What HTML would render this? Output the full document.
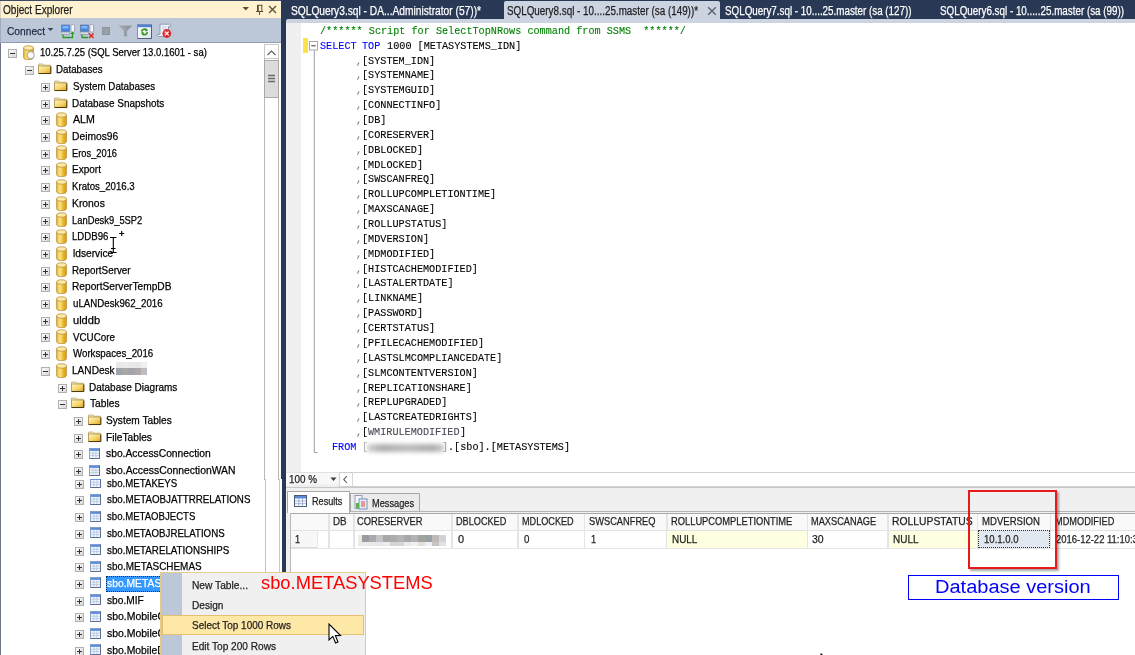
<!DOCTYPE html>
<html><head><meta charset="utf-8"><style>
html,body{margin:0;padding:0;width:1135px;height:655px;overflow:hidden;background:#fff}
body{position:relative}
</style></head><body>
<div style="position:absolute;left:0px;top:0px;width:1135px;height:655px;background:#293955"></div>
<div style="position:absolute;left:0px;top:0px;width:281px;height:655px;background:#ffffff"></div>
<div style="position:absolute;left:0px;top:0px;width:281px;height:1px;background:#3d4a63"></div>
<div style="position:absolute;left:0px;top:1px;width:1px;height:17px;background:#d6d2c4"></div>
<div style="position:absolute;left:0px;top:18px;width:1px;height:25px;background:#a4acbc"></div>
<div style="position:absolute;left:0px;top:43px;width:1px;height:655px;background:#6d7588"></div>
<div style="position:absolute;left:1px;top:1px;width:280px;height:17px;background:#fff2d0;border-radius:0 2px 0 0"></div>
<div style="position:absolute;left:1px;top:18px;width:280px;height:24px;background:#bcc7d8"></div>
<div style="position:absolute;left:1px;top:42px;width:280px;height:1px;background:#8e9bb0"></div>
<div style="position:absolute;left:3.00px;top:2.84px;font-family:'Liberation Sans',sans-serif;font-size:12px;line-height:normal;white-space:pre;color:#1e1e1e;-webkit-text-stroke:0.25px currentColor;transform:scaleX(0.8404);transform-origin:0 0;">Object Explorer</div>
<svg style="position:absolute;left:240px;top:4px" width="40" height="12" viewBox="0 0 40 12"><path d="M2.5 3 L9 3 L5.75 6.5 Z" fill="#5b4e35"/><path d="M17 1.3 H22.5 M21.8 1.3 V7.5 M16 7.5 H23.2 M19.6 7.5 V11" stroke="#5b4e35" stroke-width="1" fill="none"/><path d="M17.9 1.3 V7.5" stroke="#5b4e35" stroke-width="1.8"/><path d="M29 2 L36 9 M36 2 L29 9" stroke="#5b4e35" stroke-width="1.3" fill="none"/></svg>
<div style="position:absolute;left:7.00px;top:24.55px;font-family:'Liberation Sans',sans-serif;font-size:11px;line-height:normal;white-space:pre;color:#1e2a44;-webkit-text-stroke:0.25px currentColor;transform:scaleX(0.9272);transform-origin:0 0;">Connect</div>
<svg style="position:absolute;left:47px;top:27px" width="8" height="5"><path d="M0.5 1 L6.5 1 L3.5 4 Z" fill="#3a4660"/></svg>
<svg style="position:absolute;left:61px;top:24px" width="15" height="15" viewBox="0 0 15 15"><rect x="0.5" y="1" width="8" height="6.5" fill="#3b86e8" stroke="#6b7fa0" stroke-width="0.8"/><rect x="1.5" y="2" width="6" height="2.5" fill="#7fb6ff"/><rect x="0" y="8" width="8.5" height="2.5" fill="#d9dde6" stroke="#8088a0" stroke-width="0.6"/><rect x="10" y="0.5" width="3.5" height="7.5" rx="1" fill="#f4f6fa" stroke="#8a94a8" stroke-width="0.7"/><path d="M2 10.5 v3 h9.5 v-4" stroke="#2a9a2a" stroke-width="1.3" fill="none"/><path d="M9.3 10 L11.5 7.5 L13.7 10 Z" fill="#2a9a2a"/></svg>
<svg style="position:absolute;left:80px;top:24px" width="15" height="15" viewBox="0 0 15 15"><rect x="0.5" y="1" width="8" height="6.5" fill="#3b86e8" stroke="#6b7fa0" stroke-width="0.8"/><rect x="1.5" y="2" width="6" height="2.5" fill="#7fb6ff"/><rect x="0" y="8" width="8.5" height="2.5" fill="#d9dde6" stroke="#8088a0" stroke-width="0.6"/><rect x="10" y="0.5" width="3.5" height="7.5" rx="1" fill="#f4f6fa" stroke="#8a94a8" stroke-width="0.7"/><path d="M2 10.5 v3 h6" stroke="#2a9a2a" stroke-width="1.3" fill="none"/><path d="M9 9.5 L13.5 14 M13.5 9.5 L9 14" stroke="#e8281e" stroke-width="1.6"/></svg>
<div style="position:absolute;left:102px;top:27px;width:7.5px;height:7.5px;background:#9aa0a8;border:0.5px solid #8d939c;box-sizing:border-box"></div>
<svg style="position:absolute;left:118.5px;top:24.5px" width="14" height="12" viewBox="0 0 14 12"><defs><linearGradient id="flg" x1="0" y1="0" x2="1" y2="0"><stop offset="0" stop-color="#b8bcc0"/><stop offset="0.5" stop-color="#9a9ea4"/><stop offset="1" stop-color="#888c92"/></linearGradient></defs><path d="M0.5 1 H12.5 L7.6 5.8 V11 H5.4 V5.8 Z" fill="url(#flg)" stroke="#8a8e94" stroke-width="0.6"/></svg>
<svg style="position:absolute;left:137px;top:23.5px" width="15" height="15" viewBox="0 0 15 15"><defs><linearGradient id="rfg" x1="0" y1="0" x2="1" y2="1"><stop offset="0" stop-color="#ffffff"/><stop offset="1" stop-color="#dfe6f2"/></linearGradient></defs><rect x="0.5" y="0.5" width="14" height="14" fill="url(#rfg)" stroke="#7888a8" stroke-width="0.9"/><rect x="0.9" y="0.9" width="13.2" height="2.3" fill="#4a80e0"/><path d="M0.5 14.5 H14.5 V1" stroke="#50607c" stroke-width="1" fill="none"/><path d="M9.8 6.2 A3 3 0 0 0 4.6 7.6" stroke="#3a9a20" stroke-width="1.8" fill="none"/><path d="M5.2 9.6 A3 3 0 0 0 10.4 8.2" stroke="#3a9a20" stroke-width="1.8" fill="none"/><path d="M8.6 4.2 L11.2 6.8 L8.3 7.6 Z M6.4 11.4 L3.8 8.6 L6.7 7.9 Z" fill="#3a9a20"/></svg>
<svg style="position:absolute;left:156px;top:22.5px" width="17" height="16" viewBox="0 0 17 16"><path d="M4 1.2 H13.5 Q15.5 1.5 14.5 3.5 H12.5 V13.5 H2.5 Q0.3 13 1.5 11.5 H4 Z" fill="#eef2fa" stroke="#8a96ae" stroke-width="0.9"/><path d="M6 4 H10.5 M6 6 H10" stroke="#b8c6e0" stroke-width="0.8"/><circle cx="10.8" cy="10.5" r="4.4" fill="#d8262c"/><circle cx="10.3" cy="9.6" r="2.6" fill="#e8484c" opacity="0.6"/><path d="M8.9 8.6 L12.7 12.4 M12.7 8.6 L8.9 12.4" stroke="#fff" stroke-width="1.2"/></svg>
<div style="position:absolute;left:0;top:43px;width:263px;height:436px;overflow:hidden">
<div style="position:absolute;left:0;top:-43px;width:263px;height:700px">
<svg style="position:absolute;left:8px;top:49px" width="9" height="9" viewBox="0 0 9 9"><defs><linearGradient id="bg" x1="0" y1="0" x2="1" y2="1"><stop offset="0" stop-color="#fefefe"/><stop offset="1" stop-color="#d6d6d6"/></linearGradient></defs><rect x="0.5" y="0.5" width="8" height="8" fill="url(#bg)" stroke="#b0b0b0" stroke-width="1"/><path d="M2 4.5 H7" stroke="#333" stroke-width="1"/></svg>
<svg style="position:absolute;left:22.6px;top:45.199999999999996px" width="14" height="16" viewBox="0 0 14 16"><defs><linearGradient id="dbg" x1="0" y1="0" x2="1" y2="0"><stop offset="0" stop-color="#e6b830"/><stop offset="0.35" stop-color="#fbe48a"/><stop offset="0.7" stop-color="#e9b424"/><stop offset="1" stop-color="#d89a10"/></linearGradient></defs><path d="M0.6 3 V12.5 Q0.6 14.6 5.5 14.6 Q10.4 14.6 10.4 12.5 V3 Z" fill="url(#dbg)" stroke="#b89040" stroke-width="0.8"/><ellipse cx="5.5" cy="3" rx="4.9" ry="2.2" fill="#fbeaa8" stroke="#b89040" stroke-width="0.8"/><circle cx="7.7" cy="10.2" r="3.6" fill="#fbfbfb" stroke="#9a9a9a" stroke-width="0.9"/></svg>
<div style="position:absolute;left:39.65px;top:46.45px;font-family:'Liberation Sans',sans-serif;font-size:11px;line-height:normal;white-space:pre;color:#000000;-webkit-text-stroke:0.25px currentColor;transform:scaleX(0.8653);transform-origin:0 0;">10.25.7.25 (SQL Server 13.0.1601 - sa)</div>
<svg style="position:absolute;left:25px;top:66px" width="9" height="9" viewBox="0 0 9 9"><defs><linearGradient id="bg" x1="0" y1="0" x2="1" y2="1"><stop offset="0" stop-color="#fefefe"/><stop offset="1" stop-color="#d6d6d6"/></linearGradient></defs><rect x="0.5" y="0.5" width="8" height="8" fill="url(#bg)" stroke="#b0b0b0" stroke-width="1"/><path d="M2 4.5 H7" stroke="#333" stroke-width="1"/></svg>
<svg style="position:absolute;left:37.82px;top:63.10999999999999px" width="14" height="12" viewBox="0 0 14 12"><defs><linearGradient id="fg" x1="0" y1="0" x2="1" y2="1"><stop offset="0" stop-color="#fff6c4"/><stop offset="0.55" stop-color="#f6d46a"/><stop offset="1" stop-color="#e0a018"/></linearGradient></defs><path d="M0.5 1 H5 L6 2.2 H12.3 V10.5 H0.5 Z" fill="#f2e4b0" stroke="#b8a470" stroke-width="0.7"/><path d="M0.5 3 H12.8 V10.6 H0.5 Z" fill="url(#fg)" stroke="#a88a40" stroke-width="0.7"/><path d="M0.8 10.5 H12.8 V3.5" stroke="#4a3a10" stroke-width="1" fill="none"/></svg>
<div style="position:absolute;left:56.14px;top:63.15px;font-family:'Liberation Sans',sans-serif;font-size:11px;line-height:normal;white-space:pre;color:#000000;-webkit-text-stroke:0.25px currentColor;transform:scaleX(0.8854);transform-origin:0 0;">Databases</div>
<svg style="position:absolute;left:41px;top:83px" width="9" height="9" viewBox="0 0 9 9"><defs><linearGradient id="bg" x1="0" y1="0" x2="1" y2="1"><stop offset="0" stop-color="#fefefe"/><stop offset="1" stop-color="#d6d6d6"/></linearGradient></defs><rect x="0.5" y="0.5" width="8" height="8" fill="url(#bg)" stroke="#b0b0b0" stroke-width="1"/><path d="M2 4.5 H7" stroke="#333" stroke-width="1"/><path d="M4.5 2 V7" stroke="#333" stroke-width="1"/></svg>
<svg style="position:absolute;left:54.44px;top:79.82px" width="14" height="12" viewBox="0 0 14 12"><defs><linearGradient id="fg" x1="0" y1="0" x2="1" y2="1"><stop offset="0" stop-color="#fff6c4"/><stop offset="0.55" stop-color="#f6d46a"/><stop offset="1" stop-color="#e0a018"/></linearGradient></defs><path d="M0.5 1 H5 L6 2.2 H12.3 V10.5 H0.5 Z" fill="#f2e4b0" stroke="#b8a470" stroke-width="0.7"/><path d="M0.5 3 H12.8 V10.6 H0.5 Z" fill="url(#fg)" stroke="#a88a40" stroke-width="0.7"/><path d="M0.8 10.5 H12.8 V3.5" stroke="#4a3a10" stroke-width="1" fill="none"/></svg>
<div style="position:absolute;left:72.78px;top:79.86px;font-family:'Liberation Sans',sans-serif;font-size:11px;line-height:normal;white-space:pre;color:#000000;-webkit-text-stroke:0.25px currentColor;transform:scaleX(0.8894);transform-origin:0 0;">System Databases</div>
<svg style="position:absolute;left:41px;top:100px" width="9" height="9" viewBox="0 0 9 9"><defs><linearGradient id="bg" x1="0" y1="0" x2="1" y2="1"><stop offset="0" stop-color="#fefefe"/><stop offset="1" stop-color="#d6d6d6"/></linearGradient></defs><rect x="0.5" y="0.5" width="8" height="8" fill="url(#bg)" stroke="#b0b0b0" stroke-width="1"/><path d="M2 4.5 H7" stroke="#333" stroke-width="1"/><path d="M4.5 2 V7" stroke="#333" stroke-width="1"/></svg>
<svg style="position:absolute;left:54.44px;top:96.53px" width="14" height="12" viewBox="0 0 14 12"><defs><linearGradient id="fg" x1="0" y1="0" x2="1" y2="1"><stop offset="0" stop-color="#fff6c4"/><stop offset="0.55" stop-color="#f6d46a"/><stop offset="1" stop-color="#e0a018"/></linearGradient></defs><path d="M0.5 1 H5 L6 2.2 H12.3 V10.5 H0.5 Z" fill="#f2e4b0" stroke="#b8a470" stroke-width="0.7"/><path d="M0.5 3 H12.8 V10.6 H0.5 Z" fill="url(#fg)" stroke="#a88a40" stroke-width="0.7"/><path d="M0.8 10.5 H12.8 V3.5" stroke="#4a3a10" stroke-width="1" fill="none"/></svg>
<div style="position:absolute;left:72.32px;top:96.58px;font-family:'Liberation Sans',sans-serif;font-size:11px;line-height:normal;white-space:pre;color:#000000;-webkit-text-stroke:0.25px currentColor;transform:scaleX(0.9037);transform-origin:0 0;">Database Snapshots</div>
<svg style="position:absolute;left:41px;top:116px" width="9" height="9" viewBox="0 0 9 9"><defs><linearGradient id="bg" x1="0" y1="0" x2="1" y2="1"><stop offset="0" stop-color="#fefefe"/><stop offset="1" stop-color="#d6d6d6"/></linearGradient></defs><rect x="0.5" y="0.5" width="8" height="8" fill="url(#bg)" stroke="#b0b0b0" stroke-width="1"/><path d="M2 4.5 H7" stroke="#333" stroke-width="1"/><path d="M4.5 2 V7" stroke="#333" stroke-width="1"/></svg>
<svg style="position:absolute;left:55.739999999999995px;top:112.04px" width="14" height="16" viewBox="0 0 14 16"><defs><linearGradient id="dbg" x1="0" y1="0" x2="1" y2="0"><stop offset="0" stop-color="#e6b830"/><stop offset="0.35" stop-color="#fbe48a"/><stop offset="0.7" stop-color="#e9b424"/><stop offset="1" stop-color="#d89a10"/></linearGradient></defs><path d="M0.6 3 V12.5 Q0.6 14.6 5.5 14.6 Q10.4 14.6 10.4 12.5 V3 Z" fill="url(#dbg)" stroke="#b89040" stroke-width="0.8"/><ellipse cx="5.5" cy="3" rx="4.9" ry="2.2" fill="#fbeaa8" stroke="#b89040" stroke-width="0.8"/></svg>
<div style="position:absolute;left:73.00px;top:113.28px;font-family:'Liberation Sans',sans-serif;font-size:11px;line-height:normal;white-space:pre;color:#000000;-webkit-text-stroke:0.25px currentColor;transform:scaleX(0.9682);transform-origin:0 0;">ALM</div>
<svg style="position:absolute;left:41px;top:133px" width="9" height="9" viewBox="0 0 9 9"><defs><linearGradient id="bg" x1="0" y1="0" x2="1" y2="1"><stop offset="0" stop-color="#fefefe"/><stop offset="1" stop-color="#d6d6d6"/></linearGradient></defs><rect x="0.5" y="0.5" width="8" height="8" fill="url(#bg)" stroke="#b0b0b0" stroke-width="1"/><path d="M2 4.5 H7" stroke="#333" stroke-width="1"/><path d="M4.5 2 V7" stroke="#333" stroke-width="1"/></svg>
<svg style="position:absolute;left:55.739999999999995px;top:128.75000000000003px" width="14" height="16" viewBox="0 0 14 16"><defs><linearGradient id="dbg" x1="0" y1="0" x2="1" y2="0"><stop offset="0" stop-color="#e6b830"/><stop offset="0.35" stop-color="#fbe48a"/><stop offset="0.7" stop-color="#e9b424"/><stop offset="1" stop-color="#d89a10"/></linearGradient></defs><path d="M0.6 3 V12.5 Q0.6 14.6 5.5 14.6 Q10.4 14.6 10.4 12.5 V3 Z" fill="url(#dbg)" stroke="#b89040" stroke-width="0.8"/><ellipse cx="5.5" cy="3" rx="4.9" ry="2.2" fill="#fbeaa8" stroke="#b89040" stroke-width="0.8"/></svg>
<div style="position:absolute;left:72.30px;top:130.00px;font-family:'Liberation Sans',sans-serif;font-size:11px;line-height:normal;white-space:pre;color:#000000;-webkit-text-stroke:0.25px currentColor;transform:scaleX(0.9340);transform-origin:0 0;">Deimos96</div>
<svg style="position:absolute;left:41px;top:150px" width="9" height="9" viewBox="0 0 9 9"><defs><linearGradient id="bg" x1="0" y1="0" x2="1" y2="1"><stop offset="0" stop-color="#fefefe"/><stop offset="1" stop-color="#d6d6d6"/></linearGradient></defs><rect x="0.5" y="0.5" width="8" height="8" fill="url(#bg)" stroke="#b0b0b0" stroke-width="1"/><path d="M2 4.5 H7" stroke="#333" stroke-width="1"/><path d="M4.5 2 V7" stroke="#333" stroke-width="1"/></svg>
<svg style="position:absolute;left:55.739999999999995px;top:145.46px" width="14" height="16" viewBox="0 0 14 16"><defs><linearGradient id="dbg" x1="0" y1="0" x2="1" y2="0"><stop offset="0" stop-color="#e6b830"/><stop offset="0.35" stop-color="#fbe48a"/><stop offset="0.7" stop-color="#e9b424"/><stop offset="1" stop-color="#d89a10"/></linearGradient></defs><path d="M0.6 3 V12.5 Q0.6 14.6 5.5 14.6 Q10.4 14.6 10.4 12.5 V3 Z" fill="url(#dbg)" stroke="#b89040" stroke-width="0.8"/><ellipse cx="5.5" cy="3" rx="4.9" ry="2.2" fill="#fbeaa8" stroke="#b89040" stroke-width="0.8"/></svg>
<div style="position:absolute;left:72.37px;top:146.70px;font-family:'Liberation Sans',sans-serif;font-size:11px;line-height:normal;white-space:pre;color:#000000;-webkit-text-stroke:0.25px currentColor;transform:scaleX(0.8459);transform-origin:0 0;">Eros_2016</div>
<svg style="position:absolute;left:41px;top:166px" width="9" height="9" viewBox="0 0 9 9"><defs><linearGradient id="bg" x1="0" y1="0" x2="1" y2="1"><stop offset="0" stop-color="#fefefe"/><stop offset="1" stop-color="#d6d6d6"/></linearGradient></defs><rect x="0.5" y="0.5" width="8" height="8" fill="url(#bg)" stroke="#b0b0b0" stroke-width="1"/><path d="M2 4.5 H7" stroke="#333" stroke-width="1"/><path d="M4.5 2 V7" stroke="#333" stroke-width="1"/></svg>
<svg style="position:absolute;left:55.739999999999995px;top:162.17px" width="14" height="16" viewBox="0 0 14 16"><defs><linearGradient id="dbg" x1="0" y1="0" x2="1" y2="0"><stop offset="0" stop-color="#e6b830"/><stop offset="0.35" stop-color="#fbe48a"/><stop offset="0.7" stop-color="#e9b424"/><stop offset="1" stop-color="#d89a10"/></linearGradient></defs><path d="M0.6 3 V12.5 Q0.6 14.6 5.5 14.6 Q10.4 14.6 10.4 12.5 V3 Z" fill="url(#dbg)" stroke="#b89040" stroke-width="0.8"/><ellipse cx="5.5" cy="3" rx="4.9" ry="2.2" fill="#fbeaa8" stroke="#b89040" stroke-width="0.8"/></svg>
<div style="position:absolute;left:72.32px;top:163.41px;font-family:'Liberation Sans',sans-serif;font-size:11px;line-height:normal;white-space:pre;color:#000000;-webkit-text-stroke:0.25px currentColor;transform:scaleX(0.9120);transform-origin:0 0;">Export</div>
<svg style="position:absolute;left:41px;top:183px" width="9" height="9" viewBox="0 0 9 9"><defs><linearGradient id="bg" x1="0" y1="0" x2="1" y2="1"><stop offset="0" stop-color="#fefefe"/><stop offset="1" stop-color="#d6d6d6"/></linearGradient></defs><rect x="0.5" y="0.5" width="8" height="8" fill="url(#bg)" stroke="#b0b0b0" stroke-width="1"/><path d="M2 4.5 H7" stroke="#333" stroke-width="1"/><path d="M4.5 2 V7" stroke="#333" stroke-width="1"/></svg>
<svg style="position:absolute;left:55.739999999999995px;top:178.88000000000002px" width="14" height="16" viewBox="0 0 14 16"><defs><linearGradient id="dbg" x1="0" y1="0" x2="1" y2="0"><stop offset="0" stop-color="#e6b830"/><stop offset="0.35" stop-color="#fbe48a"/><stop offset="0.7" stop-color="#e9b424"/><stop offset="1" stop-color="#d89a10"/></linearGradient></defs><path d="M0.6 3 V12.5 Q0.6 14.6 5.5 14.6 Q10.4 14.6 10.4 12.5 V3 Z" fill="url(#dbg)" stroke="#b89040" stroke-width="0.8"/><ellipse cx="5.5" cy="3" rx="4.9" ry="2.2" fill="#fbeaa8" stroke="#b89040" stroke-width="0.8"/></svg>
<div style="position:absolute;left:72.34px;top:180.12px;font-family:'Liberation Sans',sans-serif;font-size:11px;line-height:normal;white-space:pre;color:#000000;-webkit-text-stroke:0.25px currentColor;transform:scaleX(0.8766);transform-origin:0 0;">Kratos_2016.3</div>
<svg style="position:absolute;left:41px;top:200px" width="9" height="9" viewBox="0 0 9 9"><defs><linearGradient id="bg" x1="0" y1="0" x2="1" y2="1"><stop offset="0" stop-color="#fefefe"/><stop offset="1" stop-color="#d6d6d6"/></linearGradient></defs><rect x="0.5" y="0.5" width="8" height="8" fill="url(#bg)" stroke="#b0b0b0" stroke-width="1"/><path d="M2 4.5 H7" stroke="#333" stroke-width="1"/><path d="M4.5 2 V7" stroke="#333" stroke-width="1"/></svg>
<svg style="position:absolute;left:55.739999999999995px;top:195.59px" width="14" height="16" viewBox="0 0 14 16"><defs><linearGradient id="dbg" x1="0" y1="0" x2="1" y2="0"><stop offset="0" stop-color="#e6b830"/><stop offset="0.35" stop-color="#fbe48a"/><stop offset="0.7" stop-color="#e9b424"/><stop offset="1" stop-color="#d89a10"/></linearGradient></defs><path d="M0.6 3 V12.5 Q0.6 14.6 5.5 14.6 Q10.4 14.6 10.4 12.5 V3 Z" fill="url(#dbg)" stroke="#b89040" stroke-width="0.8"/><ellipse cx="5.5" cy="3" rx="4.9" ry="2.2" fill="#fbeaa8" stroke="#b89040" stroke-width="0.8"/></svg>
<div style="position:absolute;left:72.29px;top:196.83px;font-family:'Liberation Sans',sans-serif;font-size:11px;line-height:normal;white-space:pre;color:#000000;-webkit-text-stroke:0.25px currentColor;transform:scaleX(0.9412);transform-origin:0 0;">Kronos</div>
<svg style="position:absolute;left:41px;top:217px" width="9" height="9" viewBox="0 0 9 9"><defs><linearGradient id="bg" x1="0" y1="0" x2="1" y2="1"><stop offset="0" stop-color="#fefefe"/><stop offset="1" stop-color="#d6d6d6"/></linearGradient></defs><rect x="0.5" y="0.5" width="8" height="8" fill="url(#bg)" stroke="#b0b0b0" stroke-width="1"/><path d="M2 4.5 H7" stroke="#333" stroke-width="1"/><path d="M4.5 2 V7" stroke="#333" stroke-width="1"/></svg>
<svg style="position:absolute;left:55.739999999999995px;top:212.30000000000004px" width="14" height="16" viewBox="0 0 14 16"><defs><linearGradient id="dbg" x1="0" y1="0" x2="1" y2="0"><stop offset="0" stop-color="#e6b830"/><stop offset="0.35" stop-color="#fbe48a"/><stop offset="0.7" stop-color="#e9b424"/><stop offset="1" stop-color="#d89a10"/></linearGradient></defs><path d="M0.6 3 V12.5 Q0.6 14.6 5.5 14.6 Q10.4 14.6 10.4 12.5 V3 Z" fill="url(#dbg)" stroke="#b89040" stroke-width="0.8"/><ellipse cx="5.5" cy="3" rx="4.9" ry="2.2" fill="#fbeaa8" stroke="#b89040" stroke-width="0.8"/></svg>
<div style="position:absolute;left:72.36px;top:213.55px;font-family:'Liberation Sans',sans-serif;font-size:11px;line-height:normal;white-space:pre;color:#000000;-webkit-text-stroke:0.25px currentColor;transform:scaleX(0.8515);transform-origin:0 0;">LanDesk9_5SP2</div>
<svg style="position:absolute;left:41px;top:233px" width="9" height="9" viewBox="0 0 9 9"><defs><linearGradient id="bg" x1="0" y1="0" x2="1" y2="1"><stop offset="0" stop-color="#fefefe"/><stop offset="1" stop-color="#d6d6d6"/></linearGradient></defs><rect x="0.5" y="0.5" width="8" height="8" fill="url(#bg)" stroke="#b0b0b0" stroke-width="1"/><path d="M2 4.5 H7" stroke="#333" stroke-width="1"/><path d="M4.5 2 V7" stroke="#333" stroke-width="1"/></svg>
<svg style="position:absolute;left:55.739999999999995px;top:229.01000000000002px" width="14" height="16" viewBox="0 0 14 16"><defs><linearGradient id="dbg" x1="0" y1="0" x2="1" y2="0"><stop offset="0" stop-color="#e6b830"/><stop offset="0.35" stop-color="#fbe48a"/><stop offset="0.7" stop-color="#e9b424"/><stop offset="1" stop-color="#d89a10"/></linearGradient></defs><path d="M0.6 3 V12.5 Q0.6 14.6 5.5 14.6 Q10.4 14.6 10.4 12.5 V3 Z" fill="url(#dbg)" stroke="#b89040" stroke-width="0.8"/><ellipse cx="5.5" cy="3" rx="4.9" ry="2.2" fill="#fbeaa8" stroke="#b89040" stroke-width="0.8"/></svg>
<div style="position:absolute;left:72.34px;top:230.25px;font-family:'Liberation Sans',sans-serif;font-size:11px;line-height:normal;white-space:pre;color:#000000;-webkit-text-stroke:0.25px currentColor;transform:scaleX(0.8765);transform-origin:0 0;">LDDB96</div>
<svg style="position:absolute;left:41px;top:250px" width="9" height="9" viewBox="0 0 9 9"><defs><linearGradient id="bg" x1="0" y1="0" x2="1" y2="1"><stop offset="0" stop-color="#fefefe"/><stop offset="1" stop-color="#d6d6d6"/></linearGradient></defs><rect x="0.5" y="0.5" width="8" height="8" fill="url(#bg)" stroke="#b0b0b0" stroke-width="1"/><path d="M2 4.5 H7" stroke="#333" stroke-width="1"/><path d="M4.5 2 V7" stroke="#333" stroke-width="1"/></svg>
<svg style="position:absolute;left:55.739999999999995px;top:245.72px" width="14" height="16" viewBox="0 0 14 16"><defs><linearGradient id="dbg" x1="0" y1="0" x2="1" y2="0"><stop offset="0" stop-color="#e6b830"/><stop offset="0.35" stop-color="#fbe48a"/><stop offset="0.7" stop-color="#e9b424"/><stop offset="1" stop-color="#d89a10"/></linearGradient></defs><path d="M0.6 3 V12.5 Q0.6 14.6 5.5 14.6 Q10.4 14.6 10.4 12.5 V3 Z" fill="url(#dbg)" stroke="#b89040" stroke-width="0.8"/><ellipse cx="5.5" cy="3" rx="4.9" ry="2.2" fill="#fbeaa8" stroke="#b89040" stroke-width="0.8"/></svg>
<div style="position:absolute;left:72.54px;top:246.97px;font-family:'Liberation Sans',sans-serif;font-size:11px;line-height:normal;white-space:pre;color:#000000;-webkit-text-stroke:0.25px currentColor;transform:scaleX(0.9263);transform-origin:0 0;">ldservice</div>
<svg style="position:absolute;left:41px;top:267px" width="9" height="9" viewBox="0 0 9 9"><defs><linearGradient id="bg" x1="0" y1="0" x2="1" y2="1"><stop offset="0" stop-color="#fefefe"/><stop offset="1" stop-color="#d6d6d6"/></linearGradient></defs><rect x="0.5" y="0.5" width="8" height="8" fill="url(#bg)" stroke="#b0b0b0" stroke-width="1"/><path d="M2 4.5 H7" stroke="#333" stroke-width="1"/><path d="M4.5 2 V7" stroke="#333" stroke-width="1"/></svg>
<svg style="position:absolute;left:55.739999999999995px;top:262.43px" width="14" height="16" viewBox="0 0 14 16"><defs><linearGradient id="dbg" x1="0" y1="0" x2="1" y2="0"><stop offset="0" stop-color="#e6b830"/><stop offset="0.35" stop-color="#fbe48a"/><stop offset="0.7" stop-color="#e9b424"/><stop offset="1" stop-color="#d89a10"/></linearGradient></defs><path d="M0.6 3 V12.5 Q0.6 14.6 5.5 14.6 Q10.4 14.6 10.4 12.5 V3 Z" fill="url(#dbg)" stroke="#b89040" stroke-width="0.8"/><ellipse cx="5.5" cy="3" rx="4.9" ry="2.2" fill="#fbeaa8" stroke="#b89040" stroke-width="0.8"/></svg>
<div style="position:absolute;left:72.33px;top:263.68px;font-family:'Liberation Sans',sans-serif;font-size:11px;line-height:normal;white-space:pre;color:#000000;-webkit-text-stroke:0.25px currentColor;transform:scaleX(0.8958);transform-origin:0 0;">ReportServer</div>
<svg style="position:absolute;left:41px;top:283px" width="9" height="9" viewBox="0 0 9 9"><defs><linearGradient id="bg" x1="0" y1="0" x2="1" y2="1"><stop offset="0" stop-color="#fefefe"/><stop offset="1" stop-color="#d6d6d6"/></linearGradient></defs><rect x="0.5" y="0.5" width="8" height="8" fill="url(#bg)" stroke="#b0b0b0" stroke-width="1"/><path d="M2 4.5 H7" stroke="#333" stroke-width="1"/><path d="M4.5 2 V7" stroke="#333" stroke-width="1"/></svg>
<svg style="position:absolute;left:55.739999999999995px;top:279.14px" width="14" height="16" viewBox="0 0 14 16"><defs><linearGradient id="dbg" x1="0" y1="0" x2="1" y2="0"><stop offset="0" stop-color="#e6b830"/><stop offset="0.35" stop-color="#fbe48a"/><stop offset="0.7" stop-color="#e9b424"/><stop offset="1" stop-color="#d89a10"/></linearGradient></defs><path d="M0.6 3 V12.5 Q0.6 14.6 5.5 14.6 Q10.4 14.6 10.4 12.5 V3 Z" fill="url(#dbg)" stroke="#b89040" stroke-width="0.8"/><ellipse cx="5.5" cy="3" rx="4.9" ry="2.2" fill="#fbeaa8" stroke="#b89040" stroke-width="0.8"/></svg>
<div style="position:absolute;left:72.31px;top:280.39px;font-family:'Liberation Sans',sans-serif;font-size:11px;line-height:normal;white-space:pre;color:#000000;-webkit-text-stroke:0.25px currentColor;transform:scaleX(0.9239);transform-origin:0 0;">ReportServerTempDB</div>
<svg style="position:absolute;left:41px;top:300px" width="9" height="9" viewBox="0 0 9 9"><defs><linearGradient id="bg" x1="0" y1="0" x2="1" y2="1"><stop offset="0" stop-color="#fefefe"/><stop offset="1" stop-color="#d6d6d6"/></linearGradient></defs><rect x="0.5" y="0.5" width="8" height="8" fill="url(#bg)" stroke="#b0b0b0" stroke-width="1"/><path d="M2 4.5 H7" stroke="#333" stroke-width="1"/><path d="M4.5 2 V7" stroke="#333" stroke-width="1"/></svg>
<svg style="position:absolute;left:55.739999999999995px;top:295.84999999999997px" width="14" height="16" viewBox="0 0 14 16"><defs><linearGradient id="dbg" x1="0" y1="0" x2="1" y2="0"><stop offset="0" stop-color="#e6b830"/><stop offset="0.35" stop-color="#fbe48a"/><stop offset="0.7" stop-color="#e9b424"/><stop offset="1" stop-color="#d89a10"/></linearGradient></defs><path d="M0.6 3 V12.5 Q0.6 14.6 5.5 14.6 Q10.4 14.6 10.4 12.5 V3 Z" fill="url(#dbg)" stroke="#b89040" stroke-width="0.8"/><ellipse cx="5.5" cy="3" rx="4.9" ry="2.2" fill="#fbeaa8" stroke="#b89040" stroke-width="0.8"/></svg>
<div style="position:absolute;left:72.56px;top:297.10px;font-family:'Liberation Sans',sans-serif;font-size:11px;line-height:normal;white-space:pre;color:#000000;-webkit-text-stroke:0.25px currentColor;transform:scaleX(0.8824);transform-origin:0 0;">uLANDesk962_2016</div>
<svg style="position:absolute;left:41px;top:317px" width="9" height="9" viewBox="0 0 9 9"><defs><linearGradient id="bg" x1="0" y1="0" x2="1" y2="1"><stop offset="0" stop-color="#fefefe"/><stop offset="1" stop-color="#d6d6d6"/></linearGradient></defs><rect x="0.5" y="0.5" width="8" height="8" fill="url(#bg)" stroke="#b0b0b0" stroke-width="1"/><path d="M2 4.5 H7" stroke="#333" stroke-width="1"/><path d="M4.5 2 V7" stroke="#333" stroke-width="1"/></svg>
<svg style="position:absolute;left:55.739999999999995px;top:312.56px" width="14" height="16" viewBox="0 0 14 16"><defs><linearGradient id="dbg" x1="0" y1="0" x2="1" y2="0"><stop offset="0" stop-color="#e6b830"/><stop offset="0.35" stop-color="#fbe48a"/><stop offset="0.7" stop-color="#e9b424"/><stop offset="1" stop-color="#d89a10"/></linearGradient></defs><path d="M0.6 3 V12.5 Q0.6 14.6 5.5 14.6 Q10.4 14.6 10.4 12.5 V3 Z" fill="url(#dbg)" stroke="#b89040" stroke-width="0.8"/><ellipse cx="5.5" cy="3" rx="4.9" ry="2.2" fill="#fbeaa8" stroke="#b89040" stroke-width="0.8"/></svg>
<div style="position:absolute;left:72.50px;top:313.81px;font-family:'Liberation Sans',sans-serif;font-size:11px;line-height:normal;white-space:pre;color:#000000;-webkit-text-stroke:0.25px currentColor;transform:scaleX(1.0057);transform-origin:0 0;">ulddb</div>
<svg style="position:absolute;left:41px;top:333px" width="9" height="9" viewBox="0 0 9 9"><defs><linearGradient id="bg" x1="0" y1="0" x2="1" y2="1"><stop offset="0" stop-color="#fefefe"/><stop offset="1" stop-color="#d6d6d6"/></linearGradient></defs><rect x="0.5" y="0.5" width="8" height="8" fill="url(#bg)" stroke="#b0b0b0" stroke-width="1"/><path d="M2 4.5 H7" stroke="#333" stroke-width="1"/><path d="M4.5 2 V7" stroke="#333" stroke-width="1"/></svg>
<svg style="position:absolute;left:55.739999999999995px;top:329.27px" width="14" height="16" viewBox="0 0 14 16"><defs><linearGradient id="dbg" x1="0" y1="0" x2="1" y2="0"><stop offset="0" stop-color="#e6b830"/><stop offset="0.35" stop-color="#fbe48a"/><stop offset="0.7" stop-color="#e9b424"/><stop offset="1" stop-color="#d89a10"/></linearGradient></defs><path d="M0.6 3 V12.5 Q0.6 14.6 5.5 14.6 Q10.4 14.6 10.4 12.5 V3 Z" fill="url(#dbg)" stroke="#b89040" stroke-width="0.8"/><ellipse cx="5.5" cy="3" rx="4.9" ry="2.2" fill="#fbeaa8" stroke="#b89040" stroke-width="0.8"/></svg>
<div style="position:absolute;left:73.00px;top:330.52px;font-family:'Liberation Sans',sans-serif;font-size:11px;line-height:normal;white-space:pre;color:#000000;-webkit-text-stroke:0.25px currentColor;transform:scaleX(0.8898);transform-origin:0 0;">VCUCore</div>
<svg style="position:absolute;left:41px;top:350px" width="9" height="9" viewBox="0 0 9 9"><defs><linearGradient id="bg" x1="0" y1="0" x2="1" y2="1"><stop offset="0" stop-color="#fefefe"/><stop offset="1" stop-color="#d6d6d6"/></linearGradient></defs><rect x="0.5" y="0.5" width="8" height="8" fill="url(#bg)" stroke="#b0b0b0" stroke-width="1"/><path d="M2 4.5 H7" stroke="#333" stroke-width="1"/><path d="M4.5 2 V7" stroke="#333" stroke-width="1"/></svg>
<svg style="position:absolute;left:55.739999999999995px;top:345.98px" width="14" height="16" viewBox="0 0 14 16"><defs><linearGradient id="dbg" x1="0" y1="0" x2="1" y2="0"><stop offset="0" stop-color="#e6b830"/><stop offset="0.35" stop-color="#fbe48a"/><stop offset="0.7" stop-color="#e9b424"/><stop offset="1" stop-color="#d89a10"/></linearGradient></defs><path d="M0.6 3 V12.5 Q0.6 14.6 5.5 14.6 Q10.4 14.6 10.4 12.5 V3 Z" fill="url(#dbg)" stroke="#b89040" stroke-width="0.8"/><ellipse cx="5.5" cy="3" rx="4.9" ry="2.2" fill="#fbeaa8" stroke="#b89040" stroke-width="0.8"/></svg>
<div style="position:absolute;left:73.00px;top:347.23px;font-family:'Liberation Sans',sans-serif;font-size:11px;line-height:normal;white-space:pre;color:#000000;-webkit-text-stroke:0.25px currentColor;transform:scaleX(0.8826);transform-origin:0 0;">Workspaces_2016</div>
<svg style="position:absolute;left:41px;top:367px" width="9" height="9" viewBox="0 0 9 9"><defs><linearGradient id="bg" x1="0" y1="0" x2="1" y2="1"><stop offset="0" stop-color="#fefefe"/><stop offset="1" stop-color="#d6d6d6"/></linearGradient></defs><rect x="0.5" y="0.5" width="8" height="8" fill="url(#bg)" stroke="#b0b0b0" stroke-width="1"/><path d="M2 4.5 H7" stroke="#333" stroke-width="1"/></svg>
<svg style="position:absolute;left:55.739999999999995px;top:362.69px" width="14" height="16" viewBox="0 0 14 16"><defs><linearGradient id="dbg" x1="0" y1="0" x2="1" y2="0"><stop offset="0" stop-color="#e6b830"/><stop offset="0.35" stop-color="#fbe48a"/><stop offset="0.7" stop-color="#e9b424"/><stop offset="1" stop-color="#d89a10"/></linearGradient></defs><path d="M0.6 3 V12.5 Q0.6 14.6 5.5 14.6 Q10.4 14.6 10.4 12.5 V3 Z" fill="url(#dbg)" stroke="#b89040" stroke-width="0.8"/><ellipse cx="5.5" cy="3" rx="4.9" ry="2.2" fill="#fbeaa8" stroke="#b89040" stroke-width="0.8"/></svg>
<div style="position:absolute;left:72.31px;top:363.94px;font-family:'Liberation Sans',sans-serif;font-size:11px;line-height:normal;white-space:pre;color:#000000;-webkit-text-stroke:0.25px currentColor;transform:scaleX(0.9180);transform-origin:0 0;">LANDesk</div>
<svg style="position:absolute;left:58px;top:384px" width="9" height="9" viewBox="0 0 9 9"><defs><linearGradient id="bg" x1="0" y1="0" x2="1" y2="1"><stop offset="0" stop-color="#fefefe"/><stop offset="1" stop-color="#d6d6d6"/></linearGradient></defs><rect x="0.5" y="0.5" width="8" height="8" fill="url(#bg)" stroke="#b0b0b0" stroke-width="1"/><path d="M2 4.5 H7" stroke="#333" stroke-width="1"/><path d="M4.5 2 V7" stroke="#333" stroke-width="1"/></svg>
<svg style="position:absolute;left:71.06px;top:380.6000000000001px" width="14" height="12" viewBox="0 0 14 12"><defs><linearGradient id="fg" x1="0" y1="0" x2="1" y2="1"><stop offset="0" stop-color="#fff6c4"/><stop offset="0.55" stop-color="#f6d46a"/><stop offset="1" stop-color="#e0a018"/></linearGradient></defs><path d="M0.5 1 H5 L6 2.2 H12.3 V10.5 H0.5 Z" fill="#f2e4b0" stroke="#b8a470" stroke-width="0.7"/><path d="M0.5 3 H12.8 V10.6 H0.5 Z" fill="url(#fg)" stroke="#a88a40" stroke-width="0.7"/><path d="M0.8 10.5 H12.8 V3.5" stroke="#4a3a10" stroke-width="1" fill="none"/></svg>
<div style="position:absolute;left:89.02px;top:380.65px;font-family:'Liberation Sans',sans-serif;font-size:11px;line-height:normal;white-space:pre;color:#000000;-webkit-text-stroke:0.25px currentColor;transform:scaleX(0.9091);transform-origin:0 0;">Database Diagrams</div>
<svg style="position:absolute;left:58px;top:400px" width="9" height="9" viewBox="0 0 9 9"><defs><linearGradient id="bg" x1="0" y1="0" x2="1" y2="1"><stop offset="0" stop-color="#fefefe"/><stop offset="1" stop-color="#d6d6d6"/></linearGradient></defs><rect x="0.5" y="0.5" width="8" height="8" fill="url(#bg)" stroke="#b0b0b0" stroke-width="1"/><path d="M2 4.5 H7" stroke="#333" stroke-width="1"/></svg>
<svg style="position:absolute;left:71.06px;top:397.31000000000006px" width="14" height="12" viewBox="0 0 14 12"><defs><linearGradient id="fg" x1="0" y1="0" x2="1" y2="1"><stop offset="0" stop-color="#fff6c4"/><stop offset="0.55" stop-color="#f6d46a"/><stop offset="1" stop-color="#e0a018"/></linearGradient></defs><path d="M0.5 1 H5 L6 2.2 H12.3 V10.5 H0.5 Z" fill="#f2e4b0" stroke="#b8a470" stroke-width="0.7"/><path d="M0.5 3 H12.8 V10.6 H0.5 Z" fill="url(#fg)" stroke="#a88a40" stroke-width="0.7"/><path d="M0.8 10.5 H12.8 V3.5" stroke="#4a3a10" stroke-width="1" fill="none"/></svg>
<div style="position:absolute;left:89.70px;top:397.36px;font-family:'Liberation Sans',sans-serif;font-size:11px;line-height:normal;white-space:pre;color:#000000;-webkit-text-stroke:0.25px currentColor;transform:scaleX(0.9302);transform-origin:0 0;">Tables</div>
<svg style="position:absolute;left:74px;top:417px" width="9" height="9" viewBox="0 0 9 9"><defs><linearGradient id="bg" x1="0" y1="0" x2="1" y2="1"><stop offset="0" stop-color="#fefefe"/><stop offset="1" stop-color="#d6d6d6"/></linearGradient></defs><rect x="0.5" y="0.5" width="8" height="8" fill="url(#bg)" stroke="#b0b0b0" stroke-width="1"/><path d="M2 4.5 H7" stroke="#333" stroke-width="1"/><path d="M4.5 2 V7" stroke="#333" stroke-width="1"/></svg>
<svg style="position:absolute;left:87.68px;top:414.02000000000004px" width="14" height="12" viewBox="0 0 14 12"><defs><linearGradient id="fg" x1="0" y1="0" x2="1" y2="1"><stop offset="0" stop-color="#fff6c4"/><stop offset="0.55" stop-color="#f6d46a"/><stop offset="1" stop-color="#e0a018"/></linearGradient></defs><path d="M0.5 1 H5 L6 2.2 H12.3 V10.5 H0.5 Z" fill="#f2e4b0" stroke="#b8a470" stroke-width="0.7"/><path d="M0.5 3 H12.8 V10.6 H0.5 Z" fill="url(#fg)" stroke="#a88a40" stroke-width="0.7"/><path d="M0.8 10.5 H12.8 V3.5" stroke="#4a3a10" stroke-width="1" fill="none"/></svg>
<div style="position:absolute;left:105.97px;top:414.07px;font-family:'Liberation Sans',sans-serif;font-size:11px;line-height:normal;white-space:pre;color:#000000;-webkit-text-stroke:0.25px currentColor;transform:scaleX(0.9216);transform-origin:0 0;">System Tables</div>
<svg style="position:absolute;left:74px;top:434px" width="9" height="9" viewBox="0 0 9 9"><defs><linearGradient id="bg" x1="0" y1="0" x2="1" y2="1"><stop offset="0" stop-color="#fefefe"/><stop offset="1" stop-color="#d6d6d6"/></linearGradient></defs><rect x="0.5" y="0.5" width="8" height="8" fill="url(#bg)" stroke="#b0b0b0" stroke-width="1"/><path d="M2 4.5 H7" stroke="#333" stroke-width="1"/><path d="M4.5 2 V7" stroke="#333" stroke-width="1"/></svg>
<svg style="position:absolute;left:87.68px;top:430.7300000000001px" width="14" height="12" viewBox="0 0 14 12"><defs><linearGradient id="fg" x1="0" y1="0" x2="1" y2="1"><stop offset="0" stop-color="#fff6c4"/><stop offset="0.55" stop-color="#f6d46a"/><stop offset="1" stop-color="#e0a018"/></linearGradient></defs><path d="M0.5 1 H5 L6 2.2 H12.3 V10.5 H0.5 Z" fill="#f2e4b0" stroke="#b8a470" stroke-width="0.7"/><path d="M0.5 3 H12.8 V10.6 H0.5 Z" fill="url(#fg)" stroke="#a88a40" stroke-width="0.7"/><path d="M0.8 10.5 H12.8 V3.5" stroke="#4a3a10" stroke-width="1" fill="none"/></svg>
<div style="position:absolute;left:105.50px;top:430.78px;font-family:'Liberation Sans',sans-serif;font-size:11px;line-height:normal;white-space:pre;color:#000000;-webkit-text-stroke:0.25px currentColor;transform:scaleX(0.9278);transform-origin:0 0;">FileTables</div>
<svg style="position:absolute;left:74px;top:450px" width="9" height="9" viewBox="0 0 9 9"><defs><linearGradient id="bg" x1="0" y1="0" x2="1" y2="1"><stop offset="0" stop-color="#fefefe"/><stop offset="1" stop-color="#d6d6d6"/></linearGradient></defs><rect x="0.5" y="0.5" width="8" height="8" fill="url(#bg)" stroke="#b0b0b0" stroke-width="1"/><path d="M2 4.5 H7" stroke="#333" stroke-width="1"/><path d="M4.5 2 V7" stroke="#333" stroke-width="1"/></svg>
<svg style="position:absolute;left:89.48px;top:447.94000000000005px" width="11" height="11" viewBox="0 0 11 11"><rect x="0.5" y="0.5" width="10" height="10" fill="#f2f6fc" stroke="#7d96c0" stroke-width="0.9"/><rect x="0.9" y="0.9" width="9.2" height="2" fill="#5a8ee0"/><path d="M1.2 5.2 H9.8 M1.2 7.6 H9.8 M3.9 3.2 V9.8 M6.9 3.2 V9.8" stroke="#b8c8e2" stroke-width="0.9"/><path d="M0.5 10.5 H10.5 V0.5" stroke="#56688a" stroke-width="0.9" fill="none"/></svg>
<div style="position:absolute;left:105.97px;top:447.49px;font-family:'Liberation Sans',sans-serif;font-size:11px;line-height:normal;white-space:pre;color:#000000;-webkit-text-stroke:0.25px currentColor;transform:scaleX(0.9369);transform-origin:0 0;">sbo.AccessConnection</div>
<svg style="position:absolute;left:74px;top:467px" width="9" height="9" viewBox="0 0 9 9"><defs><linearGradient id="bg" x1="0" y1="0" x2="1" y2="1"><stop offset="0" stop-color="#fefefe"/><stop offset="1" stop-color="#d6d6d6"/></linearGradient></defs><rect x="0.5" y="0.5" width="8" height="8" fill="url(#bg)" stroke="#b0b0b0" stroke-width="1"/><path d="M2 4.5 H7" stroke="#333" stroke-width="1"/><path d="M4.5 2 V7" stroke="#333" stroke-width="1"/></svg>
<svg style="position:absolute;left:89.48px;top:464.65000000000003px" width="11" height="11" viewBox="0 0 11 11"><rect x="0.5" y="0.5" width="10" height="10" fill="#f2f6fc" stroke="#7d96c0" stroke-width="0.9"/><rect x="0.9" y="0.9" width="9.2" height="2" fill="#5a8ee0"/><path d="M1.2 5.2 H9.8 M1.2 7.6 H9.8 M3.9 3.2 V9.8 M6.9 3.2 V9.8" stroke="#b8c8e2" stroke-width="0.9"/><path d="M0.5 10.5 H10.5 V0.5" stroke="#56688a" stroke-width="0.9" fill="none"/></svg>
<div style="position:absolute;left:105.96px;top:464.20px;font-family:'Liberation Sans',sans-serif;font-size:11px;line-height:normal;white-space:pre;color:#000000;-webkit-text-stroke:0.25px currentColor;transform:scaleX(0.9446);transform-origin:0 0;">sbo.AccessConnectionWAN</div>
</div></div>
<div style="position:absolute;left:116.0px;top:362px;width:6.2px;height:6.5px;background:#e6e8ea"></div>
<div style="position:absolute;left:116.0px;top:368.3px;width:6.2px;height:6.5px;background:#9ea4ae"></div>
<div style="position:absolute;left:122.2px;top:362px;width:6.2px;height:6.5px;background:#eceae8"></div>
<div style="position:absolute;left:122.2px;top:368.3px;width:6.2px;height:6.5px;background:#aaa8a6"></div>
<div style="position:absolute;left:128.4px;top:362px;width:6.2px;height:6.5px;background:#e8e8ec"></div>
<div style="position:absolute;left:128.4px;top:368.3px;width:6.2px;height:6.5px;background:#a4a4ac"></div>
<div style="position:absolute;left:134.6px;top:362px;width:6.2px;height:6.5px;background:#eae6e6"></div>
<div style="position:absolute;left:134.6px;top:368.3px;width:6.2px;height:6.5px;background:#b0a8a8"></div>
<div style="position:absolute;left:140.8px;top:362px;width:6.2px;height:6.5px;background:#eeeef2"></div>
<div style="position:absolute;left:140.8px;top:368.3px;width:6.2px;height:6.5px;background:#bcbcc4"></div>
<svg style="position:absolute;left:108px;top:231px" width="20" height="24" viewBox="0 0 20 24"><path d="M2 6.5 H8.5 M5.3 6.5 V21.5 M2.5 21.5 H8.5 M3 17.5 H7.5" stroke="#000" stroke-width="1.1" fill="none"/><path d="M13.7 0 V5 M11.2 2.5 H16.2" stroke="#000" stroke-width="1.1"/></svg>
<div style="position:absolute;left:0;top:479px;width:263px;height:176px;overflow:hidden">
<div style="position:absolute;left:0;top:-479px;width:263px;height:700px">
<svg style="position:absolute;left:75px;top:480px" width="9" height="9" viewBox="0 0 9 9"><defs><linearGradient id="bg" x1="0" y1="0" x2="1" y2="1"><stop offset="0" stop-color="#fefefe"/><stop offset="1" stop-color="#d6d6d6"/></linearGradient></defs><rect x="0.5" y="0.5" width="8" height="8" fill="url(#bg)" stroke="#b0b0b0" stroke-width="1"/><path d="M2 4.5 H7" stroke="#333" stroke-width="1"/><path d="M4.5 2 V7" stroke="#333" stroke-width="1"/></svg>
<svg style="position:absolute;left:90.48px;top:477.20000000000005px" width="11" height="11" viewBox="0 0 11 11"><rect x="0.5" y="0.5" width="10" height="10" fill="#f2f6fc" stroke="#7d96c0" stroke-width="0.9"/><rect x="0.9" y="0.9" width="9.2" height="2" fill="#5a8ee0"/><path d="M1.2 5.2 H9.8 M1.2 7.6 H9.8 M3.9 3.2 V9.8 M6.9 3.2 V9.8" stroke="#b8c8e2" stroke-width="0.9"/><path d="M0.5 10.5 H10.5 V0.5" stroke="#56688a" stroke-width="0.9" fill="none"/></svg>
<div style="position:absolute;left:107.18px;top:476.75px;font-family:'Liberation Sans',sans-serif;font-size:11px;line-height:normal;white-space:pre;color:#000000;-webkit-text-stroke:0.25px currentColor;transform:scaleX(0.8782);transform-origin:0 0;">sbo.METAKEYS</div>
<svg style="position:absolute;left:75px;top:496px" width="9" height="9" viewBox="0 0 9 9"><defs><linearGradient id="bg" x1="0" y1="0" x2="1" y2="1"><stop offset="0" stop-color="#fefefe"/><stop offset="1" stop-color="#d6d6d6"/></linearGradient></defs><rect x="0.5" y="0.5" width="8" height="8" fill="url(#bg)" stroke="#b0b0b0" stroke-width="1"/><path d="M2 4.5 H7" stroke="#333" stroke-width="1"/><path d="M4.5 2 V7" stroke="#333" stroke-width="1"/></svg>
<svg style="position:absolute;left:90.48px;top:493.91px" width="11" height="11" viewBox="0 0 11 11"><rect x="0.5" y="0.5" width="10" height="10" fill="#f2f6fc" stroke="#7d96c0" stroke-width="0.9"/><rect x="0.9" y="0.9" width="9.2" height="2" fill="#5a8ee0"/><path d="M1.2 5.2 H9.8 M1.2 7.6 H9.8 M3.9 3.2 V9.8 M6.9 3.2 V9.8" stroke="#b8c8e2" stroke-width="0.9"/><path d="M0.5 10.5 H10.5 V0.5" stroke="#56688a" stroke-width="0.9" fill="none"/></svg>
<div style="position:absolute;left:107.18px;top:493.46px;font-family:'Liberation Sans',sans-serif;font-size:11px;line-height:normal;white-space:pre;color:#000000;-webkit-text-stroke:0.25px currentColor;transform:scaleX(0.8890);transform-origin:0 0;">sbo.METAOBJATTRRELATIONS</div>
<svg style="position:absolute;left:75px;top:513px" width="9" height="9" viewBox="0 0 9 9"><defs><linearGradient id="bg" x1="0" y1="0" x2="1" y2="1"><stop offset="0" stop-color="#fefefe"/><stop offset="1" stop-color="#d6d6d6"/></linearGradient></defs><rect x="0.5" y="0.5" width="8" height="8" fill="url(#bg)" stroke="#b0b0b0" stroke-width="1"/><path d="M2 4.5 H7" stroke="#333" stroke-width="1"/><path d="M4.5 2 V7" stroke="#333" stroke-width="1"/></svg>
<svg style="position:absolute;left:90.48px;top:510.62px" width="11" height="11" viewBox="0 0 11 11"><rect x="0.5" y="0.5" width="10" height="10" fill="#f2f6fc" stroke="#7d96c0" stroke-width="0.9"/><rect x="0.9" y="0.9" width="9.2" height="2" fill="#5a8ee0"/><path d="M1.2 5.2 H9.8 M1.2 7.6 H9.8 M3.9 3.2 V9.8 M6.9 3.2 V9.8" stroke="#b8c8e2" stroke-width="0.9"/><path d="M0.5 10.5 H10.5 V0.5" stroke="#56688a" stroke-width="0.9" fill="none"/></svg>
<div style="position:absolute;left:107.18px;top:510.17px;font-family:'Liberation Sans',sans-serif;font-size:11px;line-height:normal;white-space:pre;color:#000000;-webkit-text-stroke:0.25px currentColor;transform:scaleX(0.8725);transform-origin:0 0;">sbo.METAOBJECTS</div>
<svg style="position:absolute;left:75px;top:530px" width="9" height="9" viewBox="0 0 9 9"><defs><linearGradient id="bg" x1="0" y1="0" x2="1" y2="1"><stop offset="0" stop-color="#fefefe"/><stop offset="1" stop-color="#d6d6d6"/></linearGradient></defs><rect x="0.5" y="0.5" width="8" height="8" fill="url(#bg)" stroke="#b0b0b0" stroke-width="1"/><path d="M2 4.5 H7" stroke="#333" stroke-width="1"/><path d="M4.5 2 V7" stroke="#333" stroke-width="1"/></svg>
<svg style="position:absolute;left:90.48px;top:527.33px" width="11" height="11" viewBox="0 0 11 11"><rect x="0.5" y="0.5" width="10" height="10" fill="#f2f6fc" stroke="#7d96c0" stroke-width="0.9"/><rect x="0.9" y="0.9" width="9.2" height="2" fill="#5a8ee0"/><path d="M1.2 5.2 H9.8 M1.2 7.6 H9.8 M3.9 3.2 V9.8 M6.9 3.2 V9.8" stroke="#b8c8e2" stroke-width="0.9"/><path d="M0.5 10.5 H10.5 V0.5" stroke="#56688a" stroke-width="0.9" fill="none"/></svg>
<div style="position:absolute;left:107.18px;top:526.88px;font-family:'Liberation Sans',sans-serif;font-size:11px;line-height:normal;white-space:pre;color:#000000;-webkit-text-stroke:0.25px currentColor;transform:scaleX(0.8812);transform-origin:0 0;">sbo.METAOBJRELATIONS</div>
<svg style="position:absolute;left:75px;top:547px" width="9" height="9" viewBox="0 0 9 9"><defs><linearGradient id="bg" x1="0" y1="0" x2="1" y2="1"><stop offset="0" stop-color="#fefefe"/><stop offset="1" stop-color="#d6d6d6"/></linearGradient></defs><rect x="0.5" y="0.5" width="8" height="8" fill="url(#bg)" stroke="#b0b0b0" stroke-width="1"/><path d="M2 4.5 H7" stroke="#333" stroke-width="1"/><path d="M4.5 2 V7" stroke="#333" stroke-width="1"/></svg>
<svg style="position:absolute;left:90.48px;top:544.0400000000001px" width="11" height="11" viewBox="0 0 11 11"><rect x="0.5" y="0.5" width="10" height="10" fill="#f2f6fc" stroke="#7d96c0" stroke-width="0.9"/><rect x="0.9" y="0.9" width="9.2" height="2" fill="#5a8ee0"/><path d="M1.2 5.2 H9.8 M1.2 7.6 H9.8 M3.9 3.2 V9.8 M6.9 3.2 V9.8" stroke="#b8c8e2" stroke-width="0.9"/><path d="M0.5 10.5 H10.5 V0.5" stroke="#56688a" stroke-width="0.9" fill="none"/></svg>
<div style="position:absolute;left:107.18px;top:543.59px;font-family:'Liberation Sans',sans-serif;font-size:11px;line-height:normal;white-space:pre;color:#000000;-webkit-text-stroke:0.25px currentColor;transform:scaleX(0.8874);transform-origin:0 0;">sbo.METARELATIONSHIPS</div>
<svg style="position:absolute;left:75px;top:563px" width="9" height="9" viewBox="0 0 9 9"><defs><linearGradient id="bg" x1="0" y1="0" x2="1" y2="1"><stop offset="0" stop-color="#fefefe"/><stop offset="1" stop-color="#d6d6d6"/></linearGradient></defs><rect x="0.5" y="0.5" width="8" height="8" fill="url(#bg)" stroke="#b0b0b0" stroke-width="1"/><path d="M2 4.5 H7" stroke="#333" stroke-width="1"/><path d="M4.5 2 V7" stroke="#333" stroke-width="1"/></svg>
<svg style="position:absolute;left:90.48px;top:560.7500000000001px" width="11" height="11" viewBox="0 0 11 11"><rect x="0.5" y="0.5" width="10" height="10" fill="#f2f6fc" stroke="#7d96c0" stroke-width="0.9"/><rect x="0.9" y="0.9" width="9.2" height="2" fill="#5a8ee0"/><path d="M1.2 5.2 H9.8 M1.2 7.6 H9.8 M3.9 3.2 V9.8 M6.9 3.2 V9.8" stroke="#b8c8e2" stroke-width="0.9"/><path d="M0.5 10.5 H10.5 V0.5" stroke="#56688a" stroke-width="0.9" fill="none"/></svg>
<div style="position:absolute;left:107.17px;top:560.30px;font-family:'Liberation Sans',sans-serif;font-size:11px;line-height:normal;white-space:pre;color:#000000;-webkit-text-stroke:0.25px currentColor;transform:scaleX(0.9017);transform-origin:0 0;">sbo.METASCHEMAS</div>
<svg style="position:absolute;left:75px;top:580px" width="9" height="9" viewBox="0 0 9 9"><defs><linearGradient id="bg" x1="0" y1="0" x2="1" y2="1"><stop offset="0" stop-color="#fefefe"/><stop offset="1" stop-color="#d6d6d6"/></linearGradient></defs><rect x="0.5" y="0.5" width="8" height="8" fill="url(#bg)" stroke="#b0b0b0" stroke-width="1"/><path d="M2 4.5 H7" stroke="#333" stroke-width="1"/><path d="M4.5 2 V7" stroke="#333" stroke-width="1"/></svg>
<svg style="position:absolute;left:90.48px;top:577.46px" width="11" height="11" viewBox="0 0 11 11"><rect x="0.5" y="0.5" width="10" height="10" fill="#f2f6fc" stroke="#7d96c0" stroke-width="0.9"/><rect x="0.9" y="0.9" width="9.2" height="2" fill="#5a8ee0"/><path d="M1.2 5.2 H9.8 M1.2 7.6 H9.8 M3.9 3.2 V9.8 M6.9 3.2 V9.8" stroke="#b8c8e2" stroke-width="0.9"/><path d="M0.5 10.5 H10.5 V0.5" stroke="#56688a" stroke-width="0.9" fill="none"/></svg>
<div style="position:absolute;left:105.60000000000001px;top:576.26px;width:58px;height:16px;background:#3399ff;border:1px dotted #1a2a50;box-sizing:border-box"></div>
<div style="position:absolute;left:107.17px;top:577.00px;font-family:'Liberation Sans',sans-serif;font-size:11px;line-height:normal;white-space:pre;color:#ffffff;-webkit-text-stroke:0.25px currentColor;transform:scaleX(0.9376);transform-origin:0 0;">sbo.METASYSTEMS</div>
<svg style="position:absolute;left:75px;top:597px" width="9" height="9" viewBox="0 0 9 9"><defs><linearGradient id="bg" x1="0" y1="0" x2="1" y2="1"><stop offset="0" stop-color="#fefefe"/><stop offset="1" stop-color="#d6d6d6"/></linearGradient></defs><rect x="0.5" y="0.5" width="8" height="8" fill="url(#bg)" stroke="#b0b0b0" stroke-width="1"/><path d="M2 4.5 H7" stroke="#333" stroke-width="1"/><path d="M4.5 2 V7" stroke="#333" stroke-width="1"/></svg>
<svg style="position:absolute;left:90.48px;top:594.1700000000001px" width="11" height="11" viewBox="0 0 11 11"><rect x="0.5" y="0.5" width="10" height="10" fill="#f2f6fc" stroke="#7d96c0" stroke-width="0.9"/><rect x="0.9" y="0.9" width="9.2" height="2" fill="#5a8ee0"/><path d="M1.2 5.2 H9.8 M1.2 7.6 H9.8 M3.9 3.2 V9.8 M6.9 3.2 V9.8" stroke="#b8c8e2" stroke-width="0.9"/><path d="M0.5 10.5 H10.5 V0.5" stroke="#56688a" stroke-width="0.9" fill="none"/></svg>
<div style="position:absolute;left:107.17px;top:593.72px;font-family:'Liberation Sans',sans-serif;font-size:11px;line-height:normal;white-space:pre;color:#000000;-webkit-text-stroke:0.25px currentColor;transform:scaleX(0.9248);transform-origin:0 0;">sbo.MIF</div>
<svg style="position:absolute;left:75px;top:613px" width="9" height="9" viewBox="0 0 9 9"><defs><linearGradient id="bg" x1="0" y1="0" x2="1" y2="1"><stop offset="0" stop-color="#fefefe"/><stop offset="1" stop-color="#d6d6d6"/></linearGradient></defs><rect x="0.5" y="0.5" width="8" height="8" fill="url(#bg)" stroke="#b0b0b0" stroke-width="1"/><path d="M2 4.5 H7" stroke="#333" stroke-width="1"/><path d="M4.5 2 V7" stroke="#333" stroke-width="1"/></svg>
<svg style="position:absolute;left:90.48px;top:610.88px" width="11" height="11" viewBox="0 0 11 11"><rect x="0.5" y="0.5" width="10" height="10" fill="#f2f6fc" stroke="#7d96c0" stroke-width="0.9"/><rect x="0.9" y="0.9" width="9.2" height="2" fill="#5a8ee0"/><path d="M1.2 5.2 H9.8 M1.2 7.6 H9.8 M3.9 3.2 V9.8 M6.9 3.2 V9.8" stroke="#b8c8e2" stroke-width="0.9"/><path d="M0.5 10.5 H10.5 V0.5" stroke="#56688a" stroke-width="0.9" fill="none"/></svg>
<div style="position:absolute;left:107.16px;top:610.42px;font-family:'Liberation Sans',sans-serif;font-size:11px;line-height:normal;white-space:pre;color:#000000;-webkit-text-stroke:0.25px currentColor;transform:scaleX(0.9500);transform-origin:0 0;">sbo.MobileConnection</div>
<svg style="position:absolute;left:75px;top:630px" width="9" height="9" viewBox="0 0 9 9"><defs><linearGradient id="bg" x1="0" y1="0" x2="1" y2="1"><stop offset="0" stop-color="#fefefe"/><stop offset="1" stop-color="#d6d6d6"/></linearGradient></defs><rect x="0.5" y="0.5" width="8" height="8" fill="url(#bg)" stroke="#b0b0b0" stroke-width="1"/><path d="M2 4.5 H7" stroke="#333" stroke-width="1"/><path d="M4.5 2 V7" stroke="#333" stroke-width="1"/></svg>
<svg style="position:absolute;left:90.48px;top:627.59px" width="11" height="11" viewBox="0 0 11 11"><rect x="0.5" y="0.5" width="10" height="10" fill="#f2f6fc" stroke="#7d96c0" stroke-width="0.9"/><rect x="0.9" y="0.9" width="9.2" height="2" fill="#5a8ee0"/><path d="M1.2 5.2 H9.8 M1.2 7.6 H9.8 M3.9 3.2 V9.8 M6.9 3.2 V9.8" stroke="#b8c8e2" stroke-width="0.9"/><path d="M0.5 10.5 H10.5 V0.5" stroke="#56688a" stroke-width="0.9" fill="none"/></svg>
<div style="position:absolute;left:107.16px;top:627.13px;font-family:'Liberation Sans',sans-serif;font-size:11px;line-height:normal;white-space:pre;color:#000000;-webkit-text-stroke:0.25px currentColor;transform:scaleX(0.9501);transform-origin:0 0;">sbo.MobileConnectionWAN</div>
<svg style="position:absolute;left:75px;top:647px" width="9" height="9" viewBox="0 0 9 9"><defs><linearGradient id="bg" x1="0" y1="0" x2="1" y2="1"><stop offset="0" stop-color="#fefefe"/><stop offset="1" stop-color="#d6d6d6"/></linearGradient></defs><rect x="0.5" y="0.5" width="8" height="8" fill="url(#bg)" stroke="#b0b0b0" stroke-width="1"/><path d="M2 4.5 H7" stroke="#333" stroke-width="1"/><path d="M4.5 2 V7" stroke="#333" stroke-width="1"/></svg>
<svg style="position:absolute;left:90.48px;top:644.3000000000001px" width="11" height="11" viewBox="0 0 11 11"><rect x="0.5" y="0.5" width="10" height="10" fill="#f2f6fc" stroke="#7d96c0" stroke-width="0.9"/><rect x="0.9" y="0.9" width="9.2" height="2" fill="#5a8ee0"/><path d="M1.2 5.2 H9.8 M1.2 7.6 H9.8 M3.9 3.2 V9.8 M6.9 3.2 V9.8" stroke="#b8c8e2" stroke-width="0.9"/><path d="M0.5 10.5 H10.5 V0.5" stroke="#56688a" stroke-width="0.9" fill="none"/></svg>
<div style="position:absolute;left:107.16px;top:643.85px;font-family:'Liberation Sans',sans-serif;font-size:11px;line-height:normal;white-space:pre;color:#000000;-webkit-text-stroke:0.25px currentColor;transform:scaleX(0.9439);transform-origin:0 0;">sbo.MobileDevices</div>
</div></div>
<div style="position:absolute;left:264px;top:43.5px;width:15px;height:436px;background:#ffffff;border-left:1px solid #b8b8b8;border-right:1px solid #b8b8b8;box-sizing:border-box"></div>
<div style="position:absolute;left:264px;top:44px;width:15px;height:15px;background:#ffffff;border:1px solid #c8c8c8;box-sizing:border-box"></div>
<svg style="position:absolute;left:266px;top:48.5px" width="11" height="8"><path d="M1.5 6 L5.5 2 L9.5 6" stroke="#606060" stroke-width="1.2" fill="none"/></svg>
<div style="position:absolute;left:264px;top:60px;width:15px;height:37.5px;background:#dcdcdc;border:1px solid #a8a8a8;box-sizing:border-box"></div>
<svg style="position:absolute;left:267px;top:74px" width="9" height="9"><path d="M1 1.5 H8 M1 4.5 H8 M1 7.5 H8" stroke="#6a6a6a" stroke-width="1.3"/></svg>
<div style="position:absolute;left:265px;top:479px;width:1px;height:176px;background:#c4c4c4"></div>
<div style="position:absolute;left:281px;top:0px;width:5px;height:479px;background:#293955"></div>
<div style="position:absolute;left:279px;top:479px;width:2.5px;height:176px;background:#ffffff"></div>
<div style="position:absolute;left:279.3px;top:479px;width:0.8px;height:176px;background:#c8c8c8"></div>
<div style="position:absolute;left:281.5px;top:479px;width:5.5px;height:176px;background:#293955"></div>
<div style="position:absolute;left:287px;top:479px;width:3px;height:176px;background:#f0f0f0"></div>
<div style="position:absolute;left:290.60px;top:3.94px;font-family:'Liberation Sans',sans-serif;font-size:12px;line-height:normal;white-space:pre;color:#ffffff;-webkit-text-stroke:0.25px currentColor;transform:scaleX(0.8505);transform-origin:0 0;">SQLQuery3.sql - DA...Administrator (57))*</div>
<div style="position:absolute;left:503.5px;top:1px;width:216.5px;height:18px;background:#ccd3e1;border-radius:2px 2px 0 0"></div>
<div style="position:absolute;left:507.20px;top:3.94px;font-family:'Liberation Sans',sans-serif;font-size:12px;line-height:normal;white-space:pre;color:#1e1e1e;-webkit-text-stroke:0.25px currentColor;transform:scaleX(0.8206);transform-origin:0 0;">SQLQuery8.sql - 10....25.master (sa (149))*</div>
<svg style="position:absolute;left:706.5px;top:6px" width="10" height="10"><path d="M1.2 1.2 L8.8 8.8 M8.8 1.2 L1.2 8.8" stroke="#5e6675" stroke-width="1.5"/></svg>
<div style="position:absolute;left:725.00px;top:3.94px;font-family:'Liberation Sans',sans-serif;font-size:12px;line-height:normal;white-space:pre;color:#ffffff;-webkit-text-stroke:0.25px currentColor;transform:scaleX(0.8176);transform-origin:0 0;">SQLQuery7.sql - 10....25.master (sa (127))</div>
<div style="position:absolute;left:939.50px;top:3.94px;font-family:'Liberation Sans',sans-serif;font-size:12px;line-height:normal;white-space:pre;color:#ffffff;-webkit-text-stroke:0.25px currentColor;transform:scaleX(0.8187);transform-origin:0 0;">SQLQuery6.sql - 10.....25.master (sa (99))</div>
<div style="position:absolute;left:286px;top:19px;width:849px;height:453px;background:#ffffff;border-radius:3px 0 0 0"></div>
<div style="position:absolute;left:286px;top:19px;width:849px;height:4px;background:#ccd3e1;border-radius:3px 0 0 0"></div>
<div style="position:absolute;left:286px;top:23px;width:15px;height:449px;background:#f0f0f0"></div>
<div style="position:absolute;left:302.5px;top:38px;width:5px;height:14.5px;background:#fde34a"></div>
<svg style="position:absolute;left:309px;top:40.5px" width="10" height="415"><rect x="0.5" y="0.5" width="8" height="8.5" fill="#fff" stroke="#a8a8a8" stroke-width="1"/><path d="M2.3 4.8 H6.7" stroke="#4a4a4a" stroke-width="1.1"/><path d="M5.3 9.5 V411.5 H8.5" stroke="#a0a0a0" stroke-width="1" fill="none"/></svg>
<div style="position:absolute;left:319.60px;top:23.87px;font-family:'Liberation Mono',monospace;font-size:11.8px;line-height:normal;white-space:pre;color:#008000;-webkit-text-stroke:0.12px currentColor;transform:scaleX(0.8616);transform-origin:0 0;">/****** Script for SelectTopNRows command from SSMS  ******/</div>
<div style="position:absolute;left:319.60px;top:38.73px;font-family:'Liberation Mono',monospace;font-size:11.8px;line-height:normal;white-space:pre;color:#0000ff;-webkit-text-stroke:0.12px currentColor;transform:scaleX(0.8616);transform-origin:0 0;">SELECT</div>
<div style="position:absolute;left:356.20px;top:38.73px;font-family:'Liberation Mono',monospace;font-size:11.8px;line-height:normal;white-space:pre;color:#000000;-webkit-text-stroke:0.12px currentColor;transform:scaleX(0.8616);transform-origin:0 0;"> </div>
<div style="position:absolute;left:362.30px;top:38.73px;font-family:'Liberation Mono',monospace;font-size:11.8px;line-height:normal;white-space:pre;color:#0000ff;-webkit-text-stroke:0.12px currentColor;transform:scaleX(0.8616);transform-origin:0 0;">TOP</div>
<div style="position:absolute;left:380.60px;top:38.73px;font-family:'Liberation Mono',monospace;font-size:11.8px;line-height:normal;white-space:pre;color:#000000;-webkit-text-stroke:0.12px currentColor;transform:scaleX(0.8616);transform-origin:0 0;"> 1000 [METASYSTEMS_IDN]</div>
<div style="position:absolute;left:319.60px;top:53.59px;font-family:'Liberation Mono',monospace;font-size:11.8px;line-height:normal;white-space:pre;color:#000000;-webkit-text-stroke:0.12px currentColor;transform:scaleX(0.8616);transform-origin:0 0;">      </div>
<div style="position:absolute;left:356.20px;top:53.59px;font-family:'Liberation Mono',monospace;font-size:11.8px;line-height:normal;white-space:pre;color:#808080;-webkit-text-stroke:0.12px currentColor;transform:scaleX(0.8616);transform-origin:0 0;">,</div>
<div style="position:absolute;left:362.30px;top:53.59px;font-family:'Liberation Mono',monospace;font-size:11.8px;line-height:normal;white-space:pre;color:#000000;-webkit-text-stroke:0.12px currentColor;transform:scaleX(0.8616);transform-origin:0 0;">[SYSTEM_IDN]</div>
<div style="position:absolute;left:319.60px;top:68.45px;font-family:'Liberation Mono',monospace;font-size:11.8px;line-height:normal;white-space:pre;color:#000000;-webkit-text-stroke:0.12px currentColor;transform:scaleX(0.8616);transform-origin:0 0;">      </div>
<div style="position:absolute;left:356.20px;top:68.45px;font-family:'Liberation Mono',monospace;font-size:11.8px;line-height:normal;white-space:pre;color:#808080;-webkit-text-stroke:0.12px currentColor;transform:scaleX(0.8616);transform-origin:0 0;">,</div>
<div style="position:absolute;left:362.30px;top:68.45px;font-family:'Liberation Mono',monospace;font-size:11.8px;line-height:normal;white-space:pre;color:#000000;-webkit-text-stroke:0.12px currentColor;transform:scaleX(0.8616);transform-origin:0 0;">[SYSTEMNAME]</div>
<div style="position:absolute;left:319.60px;top:83.31px;font-family:'Liberation Mono',monospace;font-size:11.8px;line-height:normal;white-space:pre;color:#000000;-webkit-text-stroke:0.12px currentColor;transform:scaleX(0.8616);transform-origin:0 0;">      </div>
<div style="position:absolute;left:356.20px;top:83.31px;font-family:'Liberation Mono',monospace;font-size:11.8px;line-height:normal;white-space:pre;color:#808080;-webkit-text-stroke:0.12px currentColor;transform:scaleX(0.8616);transform-origin:0 0;">,</div>
<div style="position:absolute;left:362.30px;top:83.31px;font-family:'Liberation Mono',monospace;font-size:11.8px;line-height:normal;white-space:pre;color:#000000;-webkit-text-stroke:0.12px currentColor;transform:scaleX(0.8616);transform-origin:0 0;">[SYSTEMGUID]</div>
<div style="position:absolute;left:319.60px;top:98.17px;font-family:'Liberation Mono',monospace;font-size:11.8px;line-height:normal;white-space:pre;color:#000000;-webkit-text-stroke:0.12px currentColor;transform:scaleX(0.8616);transform-origin:0 0;">      </div>
<div style="position:absolute;left:356.20px;top:98.17px;font-family:'Liberation Mono',monospace;font-size:11.8px;line-height:normal;white-space:pre;color:#808080;-webkit-text-stroke:0.12px currentColor;transform:scaleX(0.8616);transform-origin:0 0;">,</div>
<div style="position:absolute;left:362.30px;top:98.17px;font-family:'Liberation Mono',monospace;font-size:11.8px;line-height:normal;white-space:pre;color:#000000;-webkit-text-stroke:0.12px currentColor;transform:scaleX(0.8616);transform-origin:0 0;">[CONNECTINFO]</div>
<div style="position:absolute;left:319.60px;top:113.03px;font-family:'Liberation Mono',monospace;font-size:11.8px;line-height:normal;white-space:pre;color:#000000;-webkit-text-stroke:0.12px currentColor;transform:scaleX(0.8616);transform-origin:0 0;">      </div>
<div style="position:absolute;left:356.20px;top:113.03px;font-family:'Liberation Mono',monospace;font-size:11.8px;line-height:normal;white-space:pre;color:#808080;-webkit-text-stroke:0.12px currentColor;transform:scaleX(0.8616);transform-origin:0 0;">,</div>
<div style="position:absolute;left:362.30px;top:113.03px;font-family:'Liberation Mono',monospace;font-size:11.8px;line-height:normal;white-space:pre;color:#000000;-webkit-text-stroke:0.12px currentColor;transform:scaleX(0.8616);transform-origin:0 0;">[DB]</div>
<div style="position:absolute;left:319.60px;top:127.89px;font-family:'Liberation Mono',monospace;font-size:11.8px;line-height:normal;white-space:pre;color:#000000;-webkit-text-stroke:0.12px currentColor;transform:scaleX(0.8616);transform-origin:0 0;">      </div>
<div style="position:absolute;left:356.20px;top:127.89px;font-family:'Liberation Mono',monospace;font-size:11.8px;line-height:normal;white-space:pre;color:#808080;-webkit-text-stroke:0.12px currentColor;transform:scaleX(0.8616);transform-origin:0 0;">,</div>
<div style="position:absolute;left:362.30px;top:127.89px;font-family:'Liberation Mono',monospace;font-size:11.8px;line-height:normal;white-space:pre;color:#000000;-webkit-text-stroke:0.12px currentColor;transform:scaleX(0.8616);transform-origin:0 0;">[CORESERVER]</div>
<div style="position:absolute;left:319.60px;top:142.75px;font-family:'Liberation Mono',monospace;font-size:11.8px;line-height:normal;white-space:pre;color:#000000;-webkit-text-stroke:0.12px currentColor;transform:scaleX(0.8616);transform-origin:0 0;">      </div>
<div style="position:absolute;left:356.20px;top:142.75px;font-family:'Liberation Mono',monospace;font-size:11.8px;line-height:normal;white-space:pre;color:#808080;-webkit-text-stroke:0.12px currentColor;transform:scaleX(0.8616);transform-origin:0 0;">,</div>
<div style="position:absolute;left:362.30px;top:142.75px;font-family:'Liberation Mono',monospace;font-size:11.8px;line-height:normal;white-space:pre;color:#000000;-webkit-text-stroke:0.12px currentColor;transform:scaleX(0.8616);transform-origin:0 0;">[DBLOCKED]</div>
<div style="position:absolute;left:319.60px;top:157.61px;font-family:'Liberation Mono',monospace;font-size:11.8px;line-height:normal;white-space:pre;color:#000000;-webkit-text-stroke:0.12px currentColor;transform:scaleX(0.8616);transform-origin:0 0;">      </div>
<div style="position:absolute;left:356.20px;top:157.61px;font-family:'Liberation Mono',monospace;font-size:11.8px;line-height:normal;white-space:pre;color:#808080;-webkit-text-stroke:0.12px currentColor;transform:scaleX(0.8616);transform-origin:0 0;">,</div>
<div style="position:absolute;left:362.30px;top:157.61px;font-family:'Liberation Mono',monospace;font-size:11.8px;line-height:normal;white-space:pre;color:#000000;-webkit-text-stroke:0.12px currentColor;transform:scaleX(0.8616);transform-origin:0 0;">[MDLOCKED]</div>
<div style="position:absolute;left:319.60px;top:172.47px;font-family:'Liberation Mono',monospace;font-size:11.8px;line-height:normal;white-space:pre;color:#000000;-webkit-text-stroke:0.12px currentColor;transform:scaleX(0.8616);transform-origin:0 0;">      </div>
<div style="position:absolute;left:356.20px;top:172.47px;font-family:'Liberation Mono',monospace;font-size:11.8px;line-height:normal;white-space:pre;color:#808080;-webkit-text-stroke:0.12px currentColor;transform:scaleX(0.8616);transform-origin:0 0;">,</div>
<div style="position:absolute;left:362.30px;top:172.47px;font-family:'Liberation Mono',monospace;font-size:11.8px;line-height:normal;white-space:pre;color:#000000;-webkit-text-stroke:0.12px currentColor;transform:scaleX(0.8616);transform-origin:0 0;">[SWSCANFREQ]</div>
<div style="position:absolute;left:319.60px;top:187.33px;font-family:'Liberation Mono',monospace;font-size:11.8px;line-height:normal;white-space:pre;color:#000000;-webkit-text-stroke:0.12px currentColor;transform:scaleX(0.8616);transform-origin:0 0;">      </div>
<div style="position:absolute;left:356.20px;top:187.33px;font-family:'Liberation Mono',monospace;font-size:11.8px;line-height:normal;white-space:pre;color:#808080;-webkit-text-stroke:0.12px currentColor;transform:scaleX(0.8616);transform-origin:0 0;">,</div>
<div style="position:absolute;left:362.30px;top:187.33px;font-family:'Liberation Mono',monospace;font-size:11.8px;line-height:normal;white-space:pre;color:#000000;-webkit-text-stroke:0.12px currentColor;transform:scaleX(0.8616);transform-origin:0 0;">[ROLLUPCOMPLETIONTIME]</div>
<div style="position:absolute;left:319.60px;top:202.19px;font-family:'Liberation Mono',monospace;font-size:11.8px;line-height:normal;white-space:pre;color:#000000;-webkit-text-stroke:0.12px currentColor;transform:scaleX(0.8616);transform-origin:0 0;">      </div>
<div style="position:absolute;left:356.20px;top:202.19px;font-family:'Liberation Mono',monospace;font-size:11.8px;line-height:normal;white-space:pre;color:#808080;-webkit-text-stroke:0.12px currentColor;transform:scaleX(0.8616);transform-origin:0 0;">,</div>
<div style="position:absolute;left:362.30px;top:202.19px;font-family:'Liberation Mono',monospace;font-size:11.8px;line-height:normal;white-space:pre;color:#000000;-webkit-text-stroke:0.12px currentColor;transform:scaleX(0.8616);transform-origin:0 0;">[MAXSCANAGE]</div>
<div style="position:absolute;left:319.60px;top:217.05px;font-family:'Liberation Mono',monospace;font-size:11.8px;line-height:normal;white-space:pre;color:#000000;-webkit-text-stroke:0.12px currentColor;transform:scaleX(0.8616);transform-origin:0 0;">      </div>
<div style="position:absolute;left:356.20px;top:217.05px;font-family:'Liberation Mono',monospace;font-size:11.8px;line-height:normal;white-space:pre;color:#808080;-webkit-text-stroke:0.12px currentColor;transform:scaleX(0.8616);transform-origin:0 0;">,</div>
<div style="position:absolute;left:362.30px;top:217.05px;font-family:'Liberation Mono',monospace;font-size:11.8px;line-height:normal;white-space:pre;color:#000000;-webkit-text-stroke:0.12px currentColor;transform:scaleX(0.8616);transform-origin:0 0;">[ROLLUPSTATUS]</div>
<div style="position:absolute;left:319.60px;top:231.91px;font-family:'Liberation Mono',monospace;font-size:11.8px;line-height:normal;white-space:pre;color:#000000;-webkit-text-stroke:0.12px currentColor;transform:scaleX(0.8616);transform-origin:0 0;">      </div>
<div style="position:absolute;left:356.20px;top:231.91px;font-family:'Liberation Mono',monospace;font-size:11.8px;line-height:normal;white-space:pre;color:#808080;-webkit-text-stroke:0.12px currentColor;transform:scaleX(0.8616);transform-origin:0 0;">,</div>
<div style="position:absolute;left:362.30px;top:231.91px;font-family:'Liberation Mono',monospace;font-size:11.8px;line-height:normal;white-space:pre;color:#000000;-webkit-text-stroke:0.12px currentColor;transform:scaleX(0.8616);transform-origin:0 0;">[MDVERSION]</div>
<div style="position:absolute;left:319.60px;top:246.77px;font-family:'Liberation Mono',monospace;font-size:11.8px;line-height:normal;white-space:pre;color:#000000;-webkit-text-stroke:0.12px currentColor;transform:scaleX(0.8616);transform-origin:0 0;">      </div>
<div style="position:absolute;left:356.20px;top:246.77px;font-family:'Liberation Mono',monospace;font-size:11.8px;line-height:normal;white-space:pre;color:#808080;-webkit-text-stroke:0.12px currentColor;transform:scaleX(0.8616);transform-origin:0 0;">,</div>
<div style="position:absolute;left:362.30px;top:246.77px;font-family:'Liberation Mono',monospace;font-size:11.8px;line-height:normal;white-space:pre;color:#000000;-webkit-text-stroke:0.12px currentColor;transform:scaleX(0.8616);transform-origin:0 0;">[MDMODIFIED]</div>
<div style="position:absolute;left:319.60px;top:261.63px;font-family:'Liberation Mono',monospace;font-size:11.8px;line-height:normal;white-space:pre;color:#000000;-webkit-text-stroke:0.12px currentColor;transform:scaleX(0.8616);transform-origin:0 0;">      </div>
<div style="position:absolute;left:356.20px;top:261.63px;font-family:'Liberation Mono',monospace;font-size:11.8px;line-height:normal;white-space:pre;color:#808080;-webkit-text-stroke:0.12px currentColor;transform:scaleX(0.8616);transform-origin:0 0;">,</div>
<div style="position:absolute;left:362.30px;top:261.63px;font-family:'Liberation Mono',monospace;font-size:11.8px;line-height:normal;white-space:pre;color:#000000;-webkit-text-stroke:0.12px currentColor;transform:scaleX(0.8616);transform-origin:0 0;">[HISTCACHEMODIFIED]</div>
<div style="position:absolute;left:319.60px;top:276.49px;font-family:'Liberation Mono',monospace;font-size:11.8px;line-height:normal;white-space:pre;color:#000000;-webkit-text-stroke:0.12px currentColor;transform:scaleX(0.8616);transform-origin:0 0;">      </div>
<div style="position:absolute;left:356.20px;top:276.49px;font-family:'Liberation Mono',monospace;font-size:11.8px;line-height:normal;white-space:pre;color:#808080;-webkit-text-stroke:0.12px currentColor;transform:scaleX(0.8616);transform-origin:0 0;">,</div>
<div style="position:absolute;left:362.30px;top:276.49px;font-family:'Liberation Mono',monospace;font-size:11.8px;line-height:normal;white-space:pre;color:#000000;-webkit-text-stroke:0.12px currentColor;transform:scaleX(0.8616);transform-origin:0 0;">[LASTALERTDATE]</div>
<div style="position:absolute;left:319.60px;top:291.35px;font-family:'Liberation Mono',monospace;font-size:11.8px;line-height:normal;white-space:pre;color:#000000;-webkit-text-stroke:0.12px currentColor;transform:scaleX(0.8616);transform-origin:0 0;">      </div>
<div style="position:absolute;left:356.20px;top:291.35px;font-family:'Liberation Mono',monospace;font-size:11.8px;line-height:normal;white-space:pre;color:#808080;-webkit-text-stroke:0.12px currentColor;transform:scaleX(0.8616);transform-origin:0 0;">,</div>
<div style="position:absolute;left:362.30px;top:291.35px;font-family:'Liberation Mono',monospace;font-size:11.8px;line-height:normal;white-space:pre;color:#000000;-webkit-text-stroke:0.12px currentColor;transform:scaleX(0.8616);transform-origin:0 0;">[LINKNAME]</div>
<div style="position:absolute;left:319.60px;top:306.21px;font-family:'Liberation Mono',monospace;font-size:11.8px;line-height:normal;white-space:pre;color:#000000;-webkit-text-stroke:0.12px currentColor;transform:scaleX(0.8616);transform-origin:0 0;">      </div>
<div style="position:absolute;left:356.20px;top:306.21px;font-family:'Liberation Mono',monospace;font-size:11.8px;line-height:normal;white-space:pre;color:#808080;-webkit-text-stroke:0.12px currentColor;transform:scaleX(0.8616);transform-origin:0 0;">,</div>
<div style="position:absolute;left:362.30px;top:306.21px;font-family:'Liberation Mono',monospace;font-size:11.8px;line-height:normal;white-space:pre;color:#000000;-webkit-text-stroke:0.12px currentColor;transform:scaleX(0.8616);transform-origin:0 0;">[PASSWORD]</div>
<div style="position:absolute;left:319.60px;top:321.07px;font-family:'Liberation Mono',monospace;font-size:11.8px;line-height:normal;white-space:pre;color:#000000;-webkit-text-stroke:0.12px currentColor;transform:scaleX(0.8616);transform-origin:0 0;">      </div>
<div style="position:absolute;left:356.20px;top:321.07px;font-family:'Liberation Mono',monospace;font-size:11.8px;line-height:normal;white-space:pre;color:#808080;-webkit-text-stroke:0.12px currentColor;transform:scaleX(0.8616);transform-origin:0 0;">,</div>
<div style="position:absolute;left:362.30px;top:321.07px;font-family:'Liberation Mono',monospace;font-size:11.8px;line-height:normal;white-space:pre;color:#000000;-webkit-text-stroke:0.12px currentColor;transform:scaleX(0.8616);transform-origin:0 0;">[CERTSTATUS]</div>
<div style="position:absolute;left:319.60px;top:335.93px;font-family:'Liberation Mono',monospace;font-size:11.8px;line-height:normal;white-space:pre;color:#000000;-webkit-text-stroke:0.12px currentColor;transform:scaleX(0.8616);transform-origin:0 0;">      </div>
<div style="position:absolute;left:356.20px;top:335.93px;font-family:'Liberation Mono',monospace;font-size:11.8px;line-height:normal;white-space:pre;color:#808080;-webkit-text-stroke:0.12px currentColor;transform:scaleX(0.8616);transform-origin:0 0;">,</div>
<div style="position:absolute;left:362.30px;top:335.93px;font-family:'Liberation Mono',monospace;font-size:11.8px;line-height:normal;white-space:pre;color:#000000;-webkit-text-stroke:0.12px currentColor;transform:scaleX(0.8616);transform-origin:0 0;">[PFILECACHEMODIFIED]</div>
<div style="position:absolute;left:319.60px;top:350.79px;font-family:'Liberation Mono',monospace;font-size:11.8px;line-height:normal;white-space:pre;color:#000000;-webkit-text-stroke:0.12px currentColor;transform:scaleX(0.8616);transform-origin:0 0;">      </div>
<div style="position:absolute;left:356.20px;top:350.79px;font-family:'Liberation Mono',monospace;font-size:11.8px;line-height:normal;white-space:pre;color:#808080;-webkit-text-stroke:0.12px currentColor;transform:scaleX(0.8616);transform-origin:0 0;">,</div>
<div style="position:absolute;left:362.30px;top:350.79px;font-family:'Liberation Mono',monospace;font-size:11.8px;line-height:normal;white-space:pre;color:#000000;-webkit-text-stroke:0.12px currentColor;transform:scaleX(0.8616);transform-origin:0 0;">[LASTSLMCOMPLIANCEDATE]</div>
<div style="position:absolute;left:319.60px;top:365.65px;font-family:'Liberation Mono',monospace;font-size:11.8px;line-height:normal;white-space:pre;color:#000000;-webkit-text-stroke:0.12px currentColor;transform:scaleX(0.8616);transform-origin:0 0;">      </div>
<div style="position:absolute;left:356.20px;top:365.65px;font-family:'Liberation Mono',monospace;font-size:11.8px;line-height:normal;white-space:pre;color:#808080;-webkit-text-stroke:0.12px currentColor;transform:scaleX(0.8616);transform-origin:0 0;">,</div>
<div style="position:absolute;left:362.30px;top:365.65px;font-family:'Liberation Mono',monospace;font-size:11.8px;line-height:normal;white-space:pre;color:#000000;-webkit-text-stroke:0.12px currentColor;transform:scaleX(0.8616);transform-origin:0 0;">[SLMCONTENTVERSION]</div>
<div style="position:absolute;left:319.60px;top:380.51px;font-family:'Liberation Mono',monospace;font-size:11.8px;line-height:normal;white-space:pre;color:#000000;-webkit-text-stroke:0.12px currentColor;transform:scaleX(0.8616);transform-origin:0 0;">      </div>
<div style="position:absolute;left:356.20px;top:380.51px;font-family:'Liberation Mono',monospace;font-size:11.8px;line-height:normal;white-space:pre;color:#808080;-webkit-text-stroke:0.12px currentColor;transform:scaleX(0.8616);transform-origin:0 0;">,</div>
<div style="position:absolute;left:362.30px;top:380.51px;font-family:'Liberation Mono',monospace;font-size:11.8px;line-height:normal;white-space:pre;color:#000000;-webkit-text-stroke:0.12px currentColor;transform:scaleX(0.8616);transform-origin:0 0;">[REPLICATIONSHARE]</div>
<div style="position:absolute;left:319.60px;top:395.37px;font-family:'Liberation Mono',monospace;font-size:11.8px;line-height:normal;white-space:pre;color:#000000;-webkit-text-stroke:0.12px currentColor;transform:scaleX(0.8616);transform-origin:0 0;">      </div>
<div style="position:absolute;left:356.20px;top:395.37px;font-family:'Liberation Mono',monospace;font-size:11.8px;line-height:normal;white-space:pre;color:#808080;-webkit-text-stroke:0.12px currentColor;transform:scaleX(0.8616);transform-origin:0 0;">,</div>
<div style="position:absolute;left:362.30px;top:395.37px;font-family:'Liberation Mono',monospace;font-size:11.8px;line-height:normal;white-space:pre;color:#000000;-webkit-text-stroke:0.12px currentColor;transform:scaleX(0.8616);transform-origin:0 0;">[REPLUPGRADED]</div>
<div style="position:absolute;left:319.60px;top:410.23px;font-family:'Liberation Mono',monospace;font-size:11.8px;line-height:normal;white-space:pre;color:#000000;-webkit-text-stroke:0.12px currentColor;transform:scaleX(0.8616);transform-origin:0 0;">      </div>
<div style="position:absolute;left:356.20px;top:410.23px;font-family:'Liberation Mono',monospace;font-size:11.8px;line-height:normal;white-space:pre;color:#808080;-webkit-text-stroke:0.12px currentColor;transform:scaleX(0.8616);transform-origin:0 0;">,</div>
<div style="position:absolute;left:362.30px;top:410.23px;font-family:'Liberation Mono',monospace;font-size:11.8px;line-height:normal;white-space:pre;color:#000000;-webkit-text-stroke:0.12px currentColor;transform:scaleX(0.8616);transform-origin:0 0;">[LASTCREATEDRIGHTS]</div>
<div style="position:absolute;left:319.60px;top:425.09px;font-family:'Liberation Mono',monospace;font-size:11.8px;line-height:normal;white-space:pre;color:#000000;-webkit-text-stroke:0.12px currentColor;transform:scaleX(0.8616);transform-origin:0 0;">      </div>
<div style="position:absolute;left:356.20px;top:425.09px;font-family:'Liberation Mono',monospace;font-size:11.8px;line-height:normal;white-space:pre;color:#808080;-webkit-text-stroke:0.12px currentColor;transform:scaleX(0.8616);transform-origin:0 0;">,</div>
<div style="position:absolute;left:362.30px;top:425.09px;font-family:'Liberation Mono',monospace;font-size:11.8px;line-height:normal;white-space:pre;color:#000000;-webkit-text-stroke:0.12px currentColor;transform:scaleX(0.8616);transform-origin:0 0;">[</div>
<div style="position:absolute;left:368.40px;top:425.09px;font-family:'Liberation Mono',monospace;font-size:11.8px;line-height:normal;white-space:pre;color:#4a4a58;-webkit-text-stroke:0.12px currentColor;transform:scaleX(0.8616);transform-origin:0 0;">WMIRULEMODIFIED</div>
<div style="position:absolute;left:459.90px;top:425.09px;font-family:'Liberation Mono',monospace;font-size:11.8px;line-height:normal;white-space:pre;color:#000000;-webkit-text-stroke:0.12px currentColor;transform:scaleX(0.8616);transform-origin:0 0;">]</div>
<div style="position:absolute;left:319.60px;top:439.95px;font-family:'Liberation Mono',monospace;font-size:11.8px;line-height:normal;white-space:pre;color:#000000;-webkit-text-stroke:0.12px currentColor;transform:scaleX(0.8616);transform-origin:0 0;">  </div>
<div style="position:absolute;left:331.80px;top:439.95px;font-family:'Liberation Mono',monospace;font-size:11.8px;line-height:normal;white-space:pre;color:#0000ff;-webkit-text-stroke:0.12px currentColor;transform:scaleX(0.8616);transform-origin:0 0;">FROM</div>
<div style="position:absolute;left:356.20px;top:439.95px;font-family:'Liberation Mono',monospace;font-size:11.8px;line-height:normal;white-space:pre;color:#000000;-webkit-text-stroke:0.12px currentColor;transform:scaleX(0.8616);transform-origin:0 0;"> </div>
<div style="position:absolute;left:362.30px;top:439.95px;font-family:'Liberation Mono',monospace;font-size:11.8px;line-height:normal;white-space:pre;color:#b0b0b0;-webkit-text-stroke:0.12px currentColor;transform:scaleX(0.8616);transform-origin:0 0;">[</div>
<div style="position:absolute;left:368.40px;top:439.95px;font-family:'Liberation Mono',monospace;font-size:11.8px;line-height:normal;white-space:pre;color:#000000;-webkit-text-stroke:0.12px currentColor;transform:scaleX(0.8616);transform-origin:0 0;">            </div>
<div style="position:absolute;left:441.60px;top:439.95px;font-family:'Liberation Mono',monospace;font-size:11.8px;line-height:normal;white-space:pre;color:#a0a0a0;-webkit-text-stroke:0.12px currentColor;transform:scaleX(0.8616);transform-origin:0 0;">]</div>
<div style="position:absolute;left:447.70px;top:439.95px;font-family:'Liberation Mono',monospace;font-size:11.8px;line-height:normal;white-space:pre;color:#000000;-webkit-text-stroke:0.12px currentColor;transform:scaleX(0.8616);transform-origin:0 0;">.[sbo].[METASYSTEMS]</div>
<div style="position:absolute;left:367px;top:443.5px;width:77px;height:8.5px;background:linear-gradient(90deg,#c8c8c8,#9a9a9a 20%,#acacac 55%,#989898 85%,#c0c0c0);filter:blur(2px);opacity:0.8"></div>
<div style="position:absolute;left:286px;top:472px;width:849px;height:15.5px;background:linear-gradient(#f9f9f9 0%,#f7f7f7 70%,#e8e8e8 100%);border-top:1px solid #e2e2e2;box-sizing:border-box"></div>
<div style="position:absolute;left:289.00px;top:473.05px;font-family:'Liberation Sans',sans-serif;font-size:11px;line-height:normal;white-space:pre;color:#1e1e1e;-webkit-text-stroke:0.25px currentColor;transform:scaleX(0.8973);transform-origin:0 0;">100 %</div>
<svg style="position:absolute;left:330px;top:477px" width="7" height="5"><path d="M0.5 0.5 H6.5 L3.5 4 Z" fill="#3c3c3c"/></svg>
<div style="position:absolute;left:338.5px;top:472.3px;width:14px;height:14.7px;background:#ffffff;border:1px solid #d0d0d0;box-sizing:border-box"></div>
<svg style="position:absolute;left:342px;top:475px" width="7" height="9"><path d="M5 1 L1.8 4.5 L5 8" stroke="#555" stroke-width="1.1" fill="none"/></svg>
<div style="position:absolute;left:352px;top:472.3px;width:783px;height:14.7px;background:#ffffff;border-top:1px solid #d0d0d0;border-bottom:1px solid #d0d0d0;border-left:1px solid #d8d8d8;box-sizing:border-box"></div>
<div style="position:absolute;left:286px;top:487.5px;width:849px;height:168px;background:#f0f0f0"></div>
<div style="position:absolute;left:286px;top:487px;width:849px;height:1px;background:#c8c8c8"></div>
<div style="position:absolute;left:287px;top:491.3px;width:62.5px;height:21.5px;background:#fdfdfd;border:1px solid #a8a8a8;border-bottom:none;box-sizing:border-box"></div>
<div style="position:absolute;left:349.5px;top:493.3px;width:70px;height:18.5px;background:#ebebeb;border:1px solid #a8a8a8;box-sizing:border-box"></div>
<svg style="position:absolute;left:294px;top:495px" width="13" height="12"><rect x="0.5" y="0.5" width="12" height="11" fill="#fff" stroke="#4a5a7a" stroke-width="1"/><rect x="1" y="1" width="11" height="2.5" fill="#5b8ad8"/><path d="M1 6 H12 M1 8.7 H12 M4.8 3.5 V11.5 M8.5 3.5 V11.5" stroke="#8aa0c8" stroke-width="0.8"/></svg>
<div style="position:absolute;left:311.98px;top:495.05px;font-family:'Liberation Sans',sans-serif;font-size:11px;line-height:normal;white-space:pre;color:#1e1e1e;-webkit-text-stroke:0.25px currentColor;transform:scaleX(0.8280);transform-origin:0 0;">Results</div>
<svg style="position:absolute;left:354px;top:495px" width="14" height="15"><rect x="1" y="0.5" width="7" height="13" fill="#f4f6fa" stroke="#7a88a8" stroke-width="0.8"/><rect x="5" y="4" width="8" height="10" fill="#e8eef8" stroke="#5a78b8" stroke-width="0.8"/><path d="M7 7 H11 M7 9 H11 M7 11 H11" stroke="#e04a2a" stroke-width="1"/><rect x="2" y="8" width="3" height="5" fill="#5ab04a"/></svg>
<div style="position:absolute;left:372.07px;top:496.65px;font-family:'Liberation Sans',sans-serif;font-size:11px;line-height:normal;white-space:pre;color:#1e1e1e;-webkit-text-stroke:0.25px currentColor;transform:scaleX(0.8386);transform-origin:0 0;">Messages</div>
<div style="position:absolute;left:289.5px;top:512.5px;width:846px;height:143px;background:#ffffff"></div>
<div style="position:absolute;left:289.5px;top:512.6px;width:846px;height:1px;background:#a8a8a8"></div>
<div style="position:absolute;left:349.5px;top:510.8px;width:786px;height:1px;background:#b4b4b4"></div>
<div style="position:absolute;left:289.5px;top:512.5px;width:1px;height:143px;background:#b8b8b8"></div>
<div style="position:absolute;left:290.5px;top:513.7px;width:845px;height:16px;background:#f9f9f9"></div>
<div style="position:absolute;left:290.5px;top:529.5px;width:845px;height:1px;background:#e2e2e2"></div>
<div style="position:absolute;left:290.5px;top:547.5px;width:845px;height:1px;background:#e6e6e6"></div>
<div style="position:absolute;left:290.5px;top:530.5px;width:845px;height:17px;background:#ffffff"></div>
<div style="position:absolute;left:290.5px;top:530.5px;width:27.5px;height:17px;background:#f7f7f7;border-bottom:1px solid #dcdcdc;border-right:1px solid #e8e8e8;box-sizing:border-box"></div>
<div style="position:absolute;left:328.4px;top:513.7px;width:1.5px;height:34px;background:#e4e4e4"></div>
<div style="position:absolute;left:353.2px;top:513.7px;width:1.5px;height:34px;background:#e4e4e4"></div>
<div style="position:absolute;left:451.1px;top:513.7px;width:1.5px;height:34px;background:#e4e4e4"></div>
<div style="position:absolute;left:517.3px;top:513.7px;width:1.5px;height:34px;background:#e4e4e4"></div>
<div style="position:absolute;left:583.9px;top:513.7px;width:1.5px;height:34px;background:#e4e4e4"></div>
<div style="position:absolute;left:666.0px;top:513.7px;width:1.5px;height:34px;background:#e4e4e4"></div>
<div style="position:absolute;left:806.5px;top:513.7px;width:1.5px;height:34px;background:#e4e4e4"></div>
<div style="position:absolute;left:887.3px;top:513.7px;width:1.5px;height:34px;background:#e4e4e4"></div>
<div style="position:absolute;left:976.5px;top:513.7px;width:1.5px;height:34px;background:#e4e4e4"></div>
<div style="position:absolute;left:1049.5px;top:513.7px;width:1.5px;height:34px;background:#e4e4e4"></div>
<div style="position:absolute;left:332.86px;top:515.29px;font-family:'Liberation Sans',sans-serif;font-size:11.5px;line-height:normal;white-space:pre;color:#1e1e1e;-webkit-text-stroke:0.25px currentColor;transform:scaleX(0.8542);transform-origin:0 0;">DB</div>
<div style="position:absolute;left:357.49px;top:515.29px;font-family:'Liberation Sans',sans-serif;font-size:11.5px;line-height:normal;white-space:pre;color:#1e1e1e;-webkit-text-stroke:0.25px currentColor;transform:scaleX(0.8151);transform-origin:0 0;">CORESERVER</div>
<div style="position:absolute;left:455.90px;top:515.29px;font-family:'Liberation Sans',sans-serif;font-size:11.5px;line-height:normal;white-space:pre;color:#1e1e1e;-webkit-text-stroke:0.25px currentColor;transform:scaleX(0.7952);transform-origin:0 0;">DBLOCKED</div>
<div style="position:absolute;left:521.91px;top:515.29px;font-family:'Liberation Sans',sans-serif;font-size:11.5px;line-height:normal;white-space:pre;color:#1e1e1e;-webkit-text-stroke:0.25px currentColor;transform:scaleX(0.7922);transform-origin:0 0;">MDLOCKED</div>
<div style="position:absolute;left:589.10px;top:515.29px;font-family:'Liberation Sans',sans-serif;font-size:11.5px;line-height:normal;white-space:pre;color:#1e1e1e;-webkit-text-stroke:0.25px currentColor;transform:scaleX(0.8073);transform-origin:0 0;">SWSCANFREQ</div>
<div style="position:absolute;left:670.99px;top:515.29px;font-family:'Liberation Sans',sans-serif;font-size:11.5px;line-height:normal;white-space:pre;color:#1e1e1e;-webkit-text-stroke:0.25px currentColor;transform:scaleX(0.8114);transform-origin:0 0;">ROLLUPCOMPLETIONTIME</div>
<div style="position:absolute;left:810.60px;top:515.29px;font-family:'Liberation Sans',sans-serif;font-size:11.5px;line-height:normal;white-space:pre;color:#1e1e1e;-webkit-text-stroke:0.25px currentColor;transform:scaleX(0.8025);transform-origin:0 0;">MAXSCANAGE</div>
<div style="position:absolute;left:891.73px;top:515.29px;font-family:'Liberation Sans',sans-serif;font-size:11.5px;line-height:normal;white-space:pre;color:#1e1e1e;-webkit-text-stroke:0.25px currentColor;transform:scaleX(0.8994);transform-origin:0 0;">ROLLUPSTATUS</div>
<div style="position:absolute;left:981.58px;top:515.29px;font-family:'Liberation Sans',sans-serif;font-size:11.5px;line-height:normal;white-space:pre;color:#1e1e1e;-webkit-text-stroke:0.25px currentColor;transform:scaleX(0.8322);transform-origin:0 0;">MDVERSION</div>
<div style="position:absolute;left:1054.70px;top:515.29px;font-family:'Liberation Sans',sans-serif;font-size:11.5px;line-height:normal;white-space:pre;color:#1e1e1e;-webkit-text-stroke:0.25px currentColor;transform:scaleX(0.8000);transform-origin:0 0;">MDMODIFIED</div>
<div style="position:absolute;left:667px;top:530.5px;width:140px;height:17px;background:#ffffe1"></div>
<div style="position:absolute;left:888.5px;top:530.5px;width:88px;height:17px;background:#ffffe1"></div>
<div style="position:absolute;left:977.5px;top:530.3px;width:72.5px;height:18px;background:#e2e8ef;border:1px dotted #333;box-sizing:border-box"></div>
<div style="position:absolute;left:295.17px;top:533.04px;font-family:'Liberation Sans',sans-serif;font-size:11px;line-height:normal;white-space:pre;color:#1e1e1e;-webkit-text-stroke:0.25px currentColor;transform:scaleX(0.8400);transform-origin:0 0;">1</div>
<div style="position:absolute;left:457.75px;top:533.04px;font-family:'Liberation Sans',sans-serif;font-size:11px;line-height:normal;white-space:pre;color:#1e1e1e;-webkit-text-stroke:0.25px currentColor;transform:scaleX(0.9913);transform-origin:0 0;">0</div>
<div style="position:absolute;left:523.88px;top:533.04px;font-family:'Liberation Sans',sans-serif;font-size:11px;line-height:normal;white-space:pre;color:#1e1e1e;-webkit-text-stroke:0.25px currentColor;transform:scaleX(0.8870);transform-origin:0 0;">0</div>
<div style="position:absolute;left:591.17px;top:533.04px;font-family:'Liberation Sans',sans-serif;font-size:11px;line-height:normal;white-space:pre;color:#1e1e1e;-webkit-text-stroke:0.25px currentColor;transform:scaleX(0.8400);transform-origin:0 0;">1</div>
<div style="position:absolute;left:672.43px;top:533.04px;font-family:'Liberation Sans',sans-serif;font-size:11px;line-height:normal;white-space:pre;color:#1e1e1e;-webkit-text-stroke:0.25px currentColor;transform:scaleX(0.8991);transform-origin:0 0;">NULL</div>
<div style="position:absolute;left:812.36px;top:533.04px;font-family:'Liberation Sans',sans-serif;font-size:11px;line-height:normal;white-space:pre;color:#1e1e1e;-webkit-text-stroke:0.25px currentColor;transform:scaleX(0.9532);transform-origin:0 0;">30</div>
<div style="position:absolute;left:893.32px;top:533.04px;font-family:'Liberation Sans',sans-serif;font-size:11px;line-height:normal;white-space:pre;color:#1e1e1e;-webkit-text-stroke:0.25px currentColor;transform:scaleX(0.9064);transform-origin:0 0;">NULL</div>
<div style="position:absolute;left:983.85px;top:533.04px;font-family:'Liberation Sans',sans-serif;font-size:11px;line-height:normal;white-space:pre;color:#1e1e1e;-webkit-text-stroke:0.25px currentColor;transform:scaleX(0.8697);transform-origin:0 0;">10.1.0.0</div>
<div style="position:absolute;left:1056.00px;top:533.04px;font-family:'Liberation Sans',sans-serif;font-size:11px;line-height:normal;white-space:pre;color:#1e1e1e;-webkit-text-stroke:0.25px currentColor;transform:scaleX(0.86);transform-origin:0 0;">2016-12-22 11:10:33</div>
<div style="position:absolute;left:358.1px;top:535px;width:3.8999999999999773px;height:7px;background:#f0ebe0"></div>
<div style="position:absolute;left:358.1px;top:542px;width:3.8999999999999773px;height:3.6px;background:#e8e8e8"></div>
<div style="position:absolute;left:362px;top:535px;width:7px;height:7px;background:#9c9ca0"></div>
<div style="position:absolute;left:362px;top:542px;width:7px;height:3.6px;background:#ececec"></div>
<div style="position:absolute;left:369px;top:535px;width:7px;height:7px;background:#a8aab0"></div>
<div style="position:absolute;left:369px;top:542px;width:7px;height:3.6px;background:#e8e8e4"></div>
<div style="position:absolute;left:376px;top:535px;width:7px;height:7px;background:#c4c4c4"></div>
<div style="position:absolute;left:376px;top:542px;width:7px;height:3.6px;background:#e4e8ec"></div>
<div style="position:absolute;left:383px;top:535px;width:7px;height:7px;background:#a8a8a8"></div>
<div style="position:absolute;left:383px;top:542px;width:7px;height:3.6px;background:#ececea"></div>
<div style="position:absolute;left:390px;top:535px;width:7px;height:7px;background:#acacae"></div>
<div style="position:absolute;left:390px;top:542px;width:7px;height:3.6px;background:#d4d4d4"></div>
<div style="position:absolute;left:397px;top:535px;width:7px;height:7px;background:#b6b4b8"></div>
<div style="position:absolute;left:397px;top:542px;width:7px;height:3.6px;background:#d4d4d4"></div>
<div style="position:absolute;left:404px;top:535px;width:7px;height:7px;background:#a8a8a8"></div>
<div style="position:absolute;left:404px;top:542px;width:7px;height:3.6px;background:#e8eaf0"></div>
<div style="position:absolute;left:411px;top:535px;width:7px;height:7px;background:#b4b2b4"></div>
<div style="position:absolute;left:411px;top:542px;width:7px;height:3.6px;background:#f0f0f0"></div>
<div style="position:absolute;left:418px;top:535px;width:7px;height:7px;background:#a0a4a0"></div>
<div style="position:absolute;left:418px;top:542px;width:7px;height:3.6px;background:#e4e0d8"></div>
<div style="position:absolute;left:425px;top:535px;width:7px;height:7px;background:#9aa0a4"></div>
<div style="position:absolute;left:425px;top:542px;width:7px;height:3.6px;background:#eef2f8"></div>
<div style="position:absolute;left:432px;top:535px;width:7px;height:7px;background:#c0b8b8"></div>
<div style="position:absolute;left:432px;top:542px;width:7px;height:3.6px;background:#c8c4c4"></div>
<div style="position:absolute;left:439px;top:535px;width:6.699999999999989px;height:7px;background:#d0d4d8"></div>
<div style="position:absolute;left:439px;top:542px;width:6.699999999999989px;height:3.6px;background:#e0e4e8"></div>
<div style="position:absolute;left:160.4px;top:572px;width:205.5px;height:90px;background:#f0f0f0;border:1px solid #e6cc8c;box-sizing:border-box"></div>
<div style="position:absolute;left:161.4px;top:573px;width:20.5px;height:85px;background:#bcc7d8"></div>
<div style="position:absolute;left:162px;top:615.3px;width:201.8px;height:20.2px;background:#fde8a8;border:1px solid #e5c070;box-sizing:border-box"></div>
<div style="position:absolute;left:192.30px;top:578.54px;font-family:'Liberation Sans',sans-serif;font-size:11px;line-height:normal;white-space:pre;color:#1e1e1e;-webkit-text-stroke:0.25px currentColor;transform:scaleX(0.9283);transform-origin:0 0;">New Table...</div>
<div style="position:absolute;left:192.30px;top:598.64px;font-family:'Liberation Sans',sans-serif;font-size:11px;line-height:normal;white-space:pre;color:#1e1e1e;-webkit-text-stroke:0.25px currentColor;transform:scaleX(0.9197);transform-origin:0 0;">Design</div>
<div style="position:absolute;left:192.30px;top:619.04px;font-family:'Liberation Sans',sans-serif;font-size:11px;line-height:normal;white-space:pre;color:#1e1e1e;-webkit-text-stroke:0.25px currentColor;transform:scaleX(0.9060);transform-origin:0 0;">Select Top 1000 Rows</div>
<div style="position:absolute;left:192.30px;top:639.54px;font-family:'Liberation Sans',sans-serif;font-size:11px;line-height:normal;white-space:pre;color:#1e1e1e;-webkit-text-stroke:0.25px currentColor;transform:scaleX(0.9177);transform-origin:0 0;">Edit Top 200 Rows</div>
<svg style="position:absolute;left:328px;top:623px" width="14" height="23" viewBox="0 0 14 23"><path d="M1 1 V17 L4.8 13.4 L7.6 20 L10 19 L7.4 12.6 L12.5 12.5 Z" fill="#fff" stroke="#000" stroke-width="1.1"/></svg>
<svg style="position:absolute;left:819.5px;top:652.6px" width="6" height="3"><path d="M0.5 0.3 Q1.2 -0.2 1.8 0.8 L2.2 1.5 Q3 1.2 3.2 2.2 V3 H0.5 Z" fill="#000"/></svg>
<div style="position:absolute;left:260.99px;top:573.01px;font-family:'Liberation Sans',sans-serif;font-size:18px;line-height:normal;white-space:pre;color:#ff0000;transform:scaleX(1.0179);transform-origin:0 0;">sbo.METASYSTEMS</div>
<div style="position:absolute;left:967.5px;top:490px;width:89px;height:78.5px;border:2px solid #e51b1b;box-sizing:border-box;box-shadow:2px 2px 2px rgba(0,0,0,0.35)"></div>
<div style="position:absolute;left:908px;top:574.5px;width:211px;height:25px;border:1px solid #0000ff;box-sizing:border-box;background:transparent"></div>
<div style="position:absolute;left:934.53px;top:576.51px;font-family:'Liberation Sans',sans-serif;font-size:18px;line-height:normal;white-space:pre;color:#0000ff;transform:scaleX(1.1113);transform-origin:0 0;">Database version</div>
</body></html>
